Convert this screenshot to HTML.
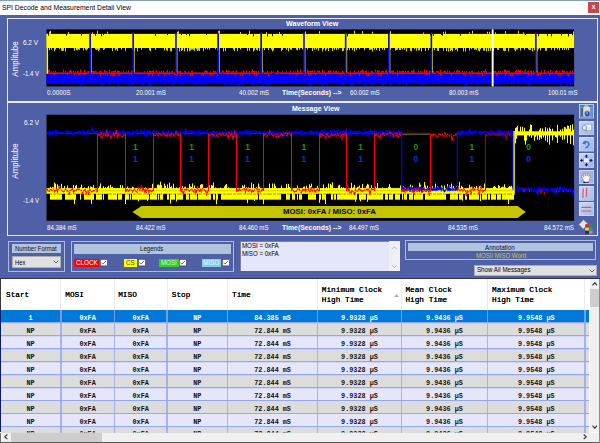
<!DOCTYPE html>
<html><head><meta charset="utf-8"><title>SPI Decode and Measurement Detail View</title>
<style>
html,body{margin:0;padding:0}
body{width:600px;height:443px;overflow:hidden;background:#5060a7;position:relative;font-family:"Liberation Sans",sans-serif}
.abs{position:absolute;display:block}
.t{position:absolute;white-space:pre;transform-origin:0 50%;font-family:"Liberation Sans",sans-serif}
</style></head><body>
<div class="abs" style="left:0;top:0;width:600px;height:15px;background:#fff;border-top:0.8px solid #7f9fba;box-sizing:border-box"></div>
<div class="abs" style="left:588.1px;top:2px;width:10.9px;height:10.9px;background:#c7484c"></div>
<div class="abs" style="left:7px;top:18.1px;width:590.5px;height:218px;border:1.4px solid #e9ecf7;box-sizing:border-box"></div>
<div class="abs" style="left:7px;top:101.2px;width:590px;height:1.4px;background:#e9ecf7"></div>
<svg class="abs" style="left:46px;top:29px" width="529" height="58" viewBox="46 29 529 58"><rect x="46.5" y="29.4" width="527.6" height="57" fill="#000"/><rect x="46.5" y="33.9" width="527.6" height="14.1" fill="#ffff00"/><path d="M49.5,31.6V33.8M50.5,30.8V33.8M68.5,31.9V33.8M92.5,32.4V33.8M97.5,30.6V33.8M107.5,31.7V33.8M177.5,31.7V33.8M178.5,31.3V33.8M218.5,31.1V33.8M219.5,30.6V33.8M240.5,32.1V33.8M249.5,30.7V33.8M266.5,32.1V33.8M279.5,32.1V33.8M305.5,31.4V33.8M319.5,31.2V33.8M354.5,30.7V33.8M362.5,31.1V33.8M372.5,31.7V33.8M390.5,31.2V33.8M423.5,32.5V33.8M443.5,31.9V33.8M445.5,31.6V33.8M469.5,32.2V33.8M472.5,30.9V33.8M487.5,31.7V33.8M489.5,31.7V33.8M495.5,32.3V33.8M505.5,31.1V33.8M518.5,30.7V33.8M523.5,32.3V33.8M573.5,31.4V33.8" stroke="#ffff00" stroke-width="0.9" fill="none"/><path d="M48.5,33.6V35.8M66.5,33.6V35.6M81.5,33.6V35.6M95.5,33.6V35.9M101.5,33.6V36.3M103.5,33.6V35.0M155.5,33.6V35.8M167.5,33.6V35.2M181.5,33.6V35.3M186.5,33.6V34.9M189.5,33.6V36.3M206.5,33.6V34.9M247.5,33.6V35.1M253.5,33.6V36.4M267.5,33.6V36.5M272.5,33.6V36.3M282.5,33.6V35.6M347.5,33.6V36.5M388.5,33.6V35.7M430.5,33.6V35.2M433.5,33.6V35.9M441.5,33.6V35.0M442.5,33.6V35.6M460.5,33.6V35.8M525.5,33.6V34.9M538.5,33.6V36.3M547.5,33.6V36.2M551.5,33.6V36.4M561.5,33.6V35.6M568.5,33.6V36.5M572.5,33.6V35.2" stroke="#000" stroke-width="0.9" fill="none"/><path d="M47.5,47.9V50.7M49.5,47.9V50.3M51.5,47.9V49.8M54.5,47.9V51.2M55.5,47.9V49.6M59.5,47.9V49.4M61.5,47.9V50.6M62.5,47.9V51.0M63.5,47.9V50.6M65.5,47.9V51.5M74.5,47.9V50.8M76.5,47.9V50.1M77.5,47.9V50.3M78.5,47.9V49.4M79.5,47.9V49.8M83.5,47.9V50.2M85.5,47.9V49.7M86.5,47.9V50.4M87.5,47.9V49.3M95.5,47.9V49.4M96.5,47.9V50.0M97.5,47.9V49.5M98.5,47.9V51.2M99.5,47.9V49.9M103.5,47.9V49.9M104.5,47.9V49.4M112.5,47.9V51.1M115.5,47.9V50.4M116.5,47.9V49.4M117.5,47.9V50.8M121.5,47.9V49.7M125.5,47.9V50.8M132.5,47.9V49.6M134.5,47.9V51.1M137.5,47.9V51.4M141.5,47.9V49.9M149.5,47.9V50.3M150.5,47.9V51.1M155.5,47.9V49.9M164.5,47.9V50.5M166.5,47.9V50.3M167.5,47.9V50.8M170.5,47.9V51.2M171.5,47.9V51.4M175.5,47.9V49.7M179.5,47.9V51.5M181.5,47.9V51.0M182.5,47.9V50.2M184.5,47.9V51.3M187.5,47.9V51.4M189.5,47.9V51.2M190.5,47.9V50.5M191.5,47.9V49.6M192.5,47.9V49.5M193.5,47.9V49.7M194.5,47.9V51.0M196.5,47.9V49.3M197.5,47.9V50.9M198.5,47.9V50.3M199.5,47.9V51.1M203.5,47.9V51.1M205.5,47.9V49.4M207.5,47.9V49.5M209.5,47.9V49.8M215.5,47.9V49.3M217.5,47.9V50.4M218.5,47.9V50.2M219.5,47.9V49.8M223.5,47.9V51.5M225.5,47.9V51.1M233.5,47.9V49.6M234.5,47.9V51.1M237.5,47.9V51.1M240.5,47.9V49.5M247.5,47.9V50.9M249.5,47.9V50.8M253.5,47.9V51.5M254.5,47.9V50.3M256.5,47.9V49.8M257.5,47.9V50.6M259.5,47.9V51.1M261.5,47.9V51.3M262.5,47.9V49.3M264.5,47.9V50.1M268.5,47.9V50.1M271.5,47.9V49.4M272.5,47.9V51.4M273.5,47.9V50.4M281.5,47.9V51.3M282.5,47.9V50.0M286.5,47.9V49.7M288.5,47.9V51.3M290.5,47.9V49.5M291.5,47.9V49.8M296.5,47.9V49.9M297.5,47.9V50.4M299.5,47.9V49.8M302.5,47.9V49.4M307.5,47.9V49.5M312.5,47.9V51.0M314.5,47.9V49.6M316.5,47.9V49.5M318.5,47.9V50.6M322.5,47.9V51.4M323.5,47.9V49.3M325.5,47.9V50.8M326.5,47.9V49.4M328.5,47.9V51.1M332.5,47.9V51.0M334.5,47.9V49.8M336.5,47.9V50.2M338.5,47.9V49.4M342.5,47.9V51.4M343.5,47.9V50.8M345.5,47.9V49.3M346.5,47.9V51.4M347.5,47.9V50.1M349.5,47.9V50.3M352.5,47.9V50.2M354.5,47.9V51.3M356.5,47.9V49.9M359.5,47.9V49.3M364.5,47.9V50.2M369.5,47.9V50.1M370.5,47.9V49.7M371.5,47.9V49.4M372.5,47.9V51.5M374.5,47.9V49.5M376.5,47.9V50.2M379.5,47.9V51.1M382.5,47.9V49.8M384.5,47.9V50.2M390.5,47.9V49.7M395.5,47.9V50.6M396.5,47.9V50.1M397.5,47.9V49.9M399.5,47.9V50.0M400.5,47.9V50.0M402.5,47.9V49.5M404.5,47.9V49.7M406.5,47.9V51.4M410.5,47.9V50.9M411.5,47.9V51.3M414.5,47.9V49.3M416.5,47.9V50.7M418.5,47.9V50.4M419.5,47.9V50.4M421.5,47.9V51.4M425.5,47.9V51.0M428.5,47.9V50.2M431.5,47.9V50.5M432.5,47.9V51.1M434.5,47.9V50.2M437.5,47.9V50.7M438.5,47.9V51.0M443.5,47.9V50.9M446.5,47.9V51.2M448.5,47.9V51.5M450.5,47.9V51.0M451.5,47.9V50.1M452.5,47.9V51.3M455.5,47.9V49.9M456.5,47.9V49.4M457.5,47.9V51.4M463.5,47.9V51.5M465.5,47.9V51.5M469.5,47.9V50.7M471.5,47.9V49.3M474.5,47.9V49.8M475.5,47.9V49.3M476.5,47.9V50.1M478.5,47.9V50.7M479.5,47.9V51.4M480.5,47.9V49.5M483.5,47.9V50.7M484.5,47.9V50.7M486.5,47.9V51.3M488.5,47.9V51.0M490.5,47.9V50.6M492.5,47.9V50.0M493.5,47.9V51.3M497.5,47.9V49.5M498.5,47.9V50.0M503.5,47.9V50.7M504.5,47.9V51.2M505.5,47.9V50.9M508.5,47.9V51.3M514.5,47.9V49.8M515.5,47.9V51.3M516.5,47.9V49.5M517.5,47.9V49.6M520.5,47.9V50.6M524.5,47.9V49.8M528.5,47.9V49.5M529.5,47.9V50.0M530.5,47.9V49.9M532.5,47.9V51.4M534.5,47.9V50.2M537.5,47.9V51.2M538.5,47.9V49.3M540.5,47.9V50.4M545.5,47.9V50.8M546.5,47.9V50.7M551.5,47.9V49.8M554.5,47.9V50.3M557.5,47.9V49.6M559.5,47.9V50.3M562.5,47.9V50.0M564.5,47.9V49.8M566.5,47.9V49.7M568.5,47.9V50.1" stroke="#f0f000" stroke-width="0.9" fill="none"/><rect x="46.5" y="72.4" width="527.6" height="2" fill="#ff0000"/><path d="M48.5,70.0V72.6M49.5,69.4V72.6M51.5,71.2V72.6M53.5,71.0V72.6M55.5,70.7V72.6M63.5,69.6V72.6M65.5,70.9V72.6M69.5,70.9V72.6M70.5,69.9V72.6M71.5,71.1V72.6M73.5,71.1V72.6M75.5,70.9V72.6M77.5,71.0V72.6M78.5,71.2V72.6M80.5,69.3V72.6M84.5,70.0V72.6M87.5,71.4V72.6M88.5,71.1V72.6M89.5,71.2V72.6M90.5,71.4V72.6M91.5,70.6V72.6M92.5,70.9V72.6M93.5,70.9V72.6M94.5,71.1V72.6M95.5,70.7V72.6M96.5,71.2V72.6M99.5,71.2V72.6M100.5,70.7V72.6M101.5,71.2V72.6M104.5,69.9V72.6M105.5,71.4V72.6M106.5,71.1V72.6M109.5,69.6V72.6M111.5,71.3V72.6M112.5,71.3V72.6M113.5,70.8V72.6M114.5,70.9V72.6M115.5,70.5V72.6M117.5,70.7V72.6M118.5,70.9V72.6M119.5,71.1V72.6M121.5,71.3V72.6M123.5,71.2V72.6M126.5,71.2V72.6M128.5,70.5V72.6M131.5,70.6V72.6M132.5,70.7V72.6M134.5,70.6V72.6M137.5,71.3V72.6M144.5,71.1V72.6M147.5,71.3V72.6M149.5,70.7V72.6M150.5,70.9V72.6M151.5,70.9V72.6M152.5,70.9V72.6M153.5,69.8V72.6M155.5,71.3V72.6M156.5,69.9V72.6M159.5,70.9V72.6M161.5,71.1V72.6M163.5,71.0V72.6M166.5,71.4V72.6M167.5,69.8V72.6M169.5,71.1V72.6M171.5,71.3V72.6M172.5,70.9V72.6M175.5,70.9V72.6M176.5,71.0V72.6M178.5,71.2V72.6M179.5,71.0V72.6M180.5,71.0V72.6M184.5,70.8V72.6M185.5,71.0V72.6M188.5,71.2V72.6M191.5,70.8V72.6M192.5,70.7V72.6M204.5,71.1V72.6M205.5,70.1V72.6M206.5,70.7V72.6M207.5,71.2V72.6M210.5,71.2V72.6M213.5,70.8V72.6M214.5,70.8V72.6M215.5,71.1V72.6M217.5,71.0V72.6M218.5,70.6V72.6M222.5,70.5V72.6M223.5,71.0V72.6M226.5,69.7V72.6M227.5,71.1V72.6M228.5,70.6V72.6M229.5,70.5V72.6M231.5,71.4V72.6M232.5,71.3V72.6M233.5,70.5V72.6M235.5,71.2V72.6M236.5,70.5V72.6M241.5,71.1V72.6M243.5,70.3V72.6M244.5,71.4V72.6M246.5,70.5V72.6M249.5,70.8V72.6M251.5,71.3V72.6M252.5,69.3V72.6M253.5,71.0V72.6M254.5,71.1V72.6M255.5,71.2V72.6M256.5,71.1V72.6M258.5,70.8V72.6M263.5,70.6V72.6M267.5,71.0V72.6M271.5,70.9V72.6M273.5,71.1V72.6M277.5,70.5V72.6M278.5,70.9V72.6M282.5,71.2V72.6M286.5,71.3V72.6M290.5,70.6V72.6M293.5,71.2V72.6M295.5,71.0V72.6M297.5,69.4V72.6M298.5,71.2V72.6M300.5,69.3V72.6M303.5,71.0V72.6M307.5,69.9V72.6M308.5,70.7V72.6M309.5,71.1V72.6M310.5,71.0V72.6M311.5,71.0V72.6M312.5,70.5V72.6M314.5,70.6V72.6M317.5,71.0V72.6M318.5,71.0V72.6M319.5,70.5V72.6M322.5,69.9V72.6M323.5,71.2V72.6M324.5,71.4V72.6M328.5,70.5V72.6M329.5,70.7V72.6M330.5,70.5V72.6M333.5,70.3V72.6M335.5,71.0V72.6M336.5,70.6V72.6M338.5,71.0V72.6M342.5,70.9V72.6M343.5,71.4V72.6M345.5,70.5V72.6M346.5,70.8V72.6M350.5,71.2V72.6M354.5,70.6V72.6M358.5,71.0V72.6M360.5,70.8V72.6M361.5,70.6V72.6M362.5,69.4V72.6M363.5,70.6V72.6M365.5,71.1V72.6M366.5,70.5V72.6M368.5,71.3V72.6M371.5,70.9V72.6M372.5,71.3V72.6M375.5,69.6V72.6M377.5,70.0V72.6M378.5,70.7V72.6M379.5,71.1V72.6M381.5,71.3V72.6M382.5,70.9V72.6M383.5,70.7V72.6M385.5,70.7V72.6M386.5,69.6V72.6M388.5,71.4V72.6M389.5,71.3V72.6M391.5,70.9V72.6M392.5,70.7V72.6M393.5,70.8V72.6M397.5,70.8V72.6M399.5,71.2V72.6M400.5,71.4V72.6M401.5,71.2V72.6M402.5,70.6V72.6M403.5,71.2V72.6M405.5,70.9V72.6M407.5,71.0V72.6M408.5,70.7V72.6M411.5,70.6V72.6M412.5,71.0V72.6M413.5,69.5V72.6M414.5,71.1V72.6M418.5,70.6V72.6M420.5,71.1V72.6M421.5,71.2V72.6M422.5,71.3V72.6M424.5,69.2V72.6M426.5,70.2V72.6M427.5,70.7V72.6M429.5,70.6V72.6M430.5,71.0V72.6M431.5,71.0V72.6M432.5,71.0V72.6M433.5,71.1V72.6M436.5,71.1V72.6M437.5,71.2V72.6M438.5,71.3V72.6M440.5,69.8V72.6M443.5,71.4V72.6M444.5,70.7V72.6M445.5,70.7V72.6M447.5,70.6V72.6M449.5,70.5V72.6M454.5,71.3V72.6M456.5,70.6V72.6M457.5,69.8V72.6M458.5,70.6V72.6M459.5,70.6V72.6M462.5,71.0V72.6M464.5,71.2V72.6M466.5,70.9V72.6M469.5,71.3V72.6M471.5,70.7V72.6M472.5,70.9V72.6M478.5,71.0V72.6M481.5,70.9V72.6M483.5,71.0V72.6M484.5,70.9V72.6M485.5,69.2V72.6M486.5,71.4V72.6M493.5,71.1V72.6M494.5,71.1V72.6M495.5,71.0V72.6M498.5,71.0V72.6M499.5,71.4V72.6M500.5,70.8V72.6M502.5,71.0V72.6M504.5,69.5V72.6M505.5,69.8V72.6M506.5,70.6V72.6M507.5,70.8V72.6M508.5,70.8V72.6M509.5,70.6V72.6M515.5,71.1V72.6M516.5,69.9V72.6M518.5,69.6V72.6M519.5,70.7V72.6M520.5,69.7V72.6M522.5,70.8V72.6M524.5,71.0V72.6M525.5,69.5V72.6M527.5,71.2V72.6M528.5,70.6V72.6M530.5,70.6V72.6M531.5,70.9V72.6M533.5,70.7V72.6M536.5,70.8V72.6M537.5,71.1V72.6M541.5,70.1V72.6M544.5,70.1V72.6M547.5,71.3V72.6M548.5,71.2V72.6M550.5,70.4V72.6M552.5,71.2V72.6M555.5,70.9V72.6M556.5,70.1V72.6M557.5,70.9V72.6M559.5,70.8V72.6M562.5,69.7V72.6M563.5,70.8V72.6M564.5,71.0V72.6M566.5,71.3V72.6M567.5,71.3V72.6M570.5,70.9V72.6M572.5,70.5V72.6" stroke="#ff0000" stroke-width="1.0" fill="none"/><rect x="46.5" y="74.1" width="527.6" height="9.7" fill="#0000ff"/><path d="M61.5,83.6V84.8M63.5,83.6V85.7M66.5,83.6V84.8M70.5,73.0V74.2M72.5,72.9V74.2M80.5,83.6V85.1M82.5,83.6V84.4M85.5,83.6V85.7M87.5,73.5V74.2M90.5,73.5V74.2M100.5,83.6V84.9M102.5,83.6V85.1M106.5,73.3V74.2M108.5,83.6V84.8M109.5,83.6V85.0M118.5,83.6V85.6M123.5,83.6V84.6M125.5,83.6V85.2M127.5,83.6V84.8M128.5,83.6V85.4M132.5,83.6V85.4M137.5,83.6V84.6M139.5,83.6V84.5M141.5,83.6V84.8M142.5,83.6V85.6M145.5,73.4V74.2M147.5,83.6V85.6M148.5,83.6V84.7M149.5,83.6V85.7M150.5,83.6V85.4M156.5,73.3V74.2M159.5,83.6V85.4M163.5,83.6V84.9M164.5,83.6V84.8M172.5,83.6V85.3M179.5,83.6V84.5M179.5,73.6V74.2M182.5,83.6V85.1M183.5,83.6V85.2M183.5,73.5V74.2M187.5,83.6V84.4M189.5,83.6V85.3M196.5,83.6V85.2M200.5,83.6V84.8M201.5,83.6V85.4M204.5,83.6V85.6M222.5,72.8V74.2M224.5,83.6V85.3M229.5,83.6V85.6M230.5,83.6V85.1M233.5,83.6V85.1M234.5,83.6V85.0M237.5,83.6V85.8M238.5,83.6V85.6M239.5,83.6V85.7M241.5,83.6V84.7M242.5,83.6V85.2M247.5,83.6V85.4M251.5,73.2V74.2M252.5,83.6V85.2M253.5,83.6V85.7M256.5,83.6V84.4M257.5,83.6V85.2M259.5,83.6V85.6M261.5,72.9V74.2M262.5,83.6V85.1M263.5,72.8V74.2M266.5,83.6V85.6M268.5,83.6V84.9M269.5,72.8V74.2M272.5,73.2V74.2M273.5,73.1V74.2M274.5,72.7V74.2M279.5,73.2V74.2M301.5,83.6V84.7M306.5,72.8V74.2M308.5,83.6V85.0M310.5,83.6V85.4M313.5,83.6V84.7M318.5,73.0V74.2M319.5,83.6V85.3M322.5,83.6V85.7M323.5,73.2V74.2M325.5,83.6V84.6M326.5,83.6V85.5M336.5,83.6V84.4M340.5,83.6V84.4M342.5,83.6V85.7M343.5,83.6V84.6M350.5,83.6V85.4M352.5,83.6V85.2M357.5,83.6V85.5M359.5,83.6V85.2M364.5,83.6V85.4M370.5,83.6V84.6M371.5,83.6V85.7M372.5,83.6V84.6M373.5,83.6V84.9M375.5,72.8V74.2M377.5,83.6V85.1M381.5,83.6V85.0M382.5,83.6V85.4M383.5,83.6V84.9M385.5,83.6V85.8M387.5,83.6V84.8M390.5,83.6V85.4M398.5,83.6V85.3M401.5,83.6V84.6M403.5,83.6V85.4M406.5,83.6V85.4M419.5,83.6V85.7M422.5,83.6V85.6M425.5,83.6V84.9M433.5,83.6V85.4M436.5,72.8V74.2M437.5,72.8V74.2M443.5,73.0V74.2M449.5,83.6V85.8M454.5,73.2V74.2M461.5,73.3V74.2M464.5,83.6V85.5M466.5,83.6V85.4M467.5,73.3V74.2M471.5,73.6V74.2M476.5,83.6V84.8M483.5,72.9V74.2M491.5,83.6V85.0M492.5,83.6V85.6M493.5,83.6V85.7M497.5,83.6V85.7M498.5,83.6V85.5M502.5,73.4V74.2M507.5,83.6V85.5M508.5,73.0V74.2M513.5,83.6V85.7M522.5,73.2V74.2M525.5,83.6V84.9M527.5,83.6V85.5M528.5,83.6V85.2M530.5,73.1V74.2M531.5,83.6V85.3M539.5,83.6V85.1M541.5,83.6V84.6M543.5,73.5V74.2M547.5,83.6V84.8M547.5,73.0V74.2M552.5,83.6V84.7M553.5,73.2V74.2M557.5,83.6V85.7M560.5,83.6V84.9M561.5,83.6V84.9M566.5,83.6V85.3M570.5,83.6V85.6" stroke="#0000ff" stroke-width="0.95" fill="none"/><path d="M54.5,74V75.3M67.5,74V75.1M74.5,74V75.5M78.5,74V75.0M79.5,74V74.9M84.5,74V75.2M100.5,74V76.2M103.5,74V75.0M105.5,74V75.2M107.5,74V75.8M110.5,74V75.3M112.5,74V76.1M114.5,74V75.8M118.5,74V75.5M131.5,74V75.2M139.5,74V75.1M148.5,74V75.9M152.5,74V76.1M158.5,74V75.9M164.5,74V75.8M169.5,74V75.6M174.5,74V75.2M175.5,74V74.9M176.5,74V75.8M177.5,74V75.3M180.5,74V75.8M190.5,74V75.9M192.5,74V76.0M201.5,74V75.4M202.5,74V74.9M203.5,74V75.8M210.5,74V75.2M212.5,74V74.9M217.5,74V75.7M227.5,74V75.1M234.5,74V75.4M240.5,74V75.9M242.5,74V75.2M249.5,74V75.3M254.5,74V75.4M256.5,74V75.9M268.5,74V76.1M289.5,74V75.3M293.5,74V74.8M296.5,74V74.9M304.5,74V75.5M308.5,74V75.6M311.5,74V75.9M315.5,74V75.3M325.5,74V75.9M340.5,74V74.9M344.5,74V74.8M350.5,74V75.7M359.5,74V76.0M366.5,74V76.0M368.5,74V76.0M371.5,74V75.8M378.5,74V74.8M380.5,74V75.5M381.5,74V75.8M387.5,74V74.9M397.5,74V76.2M426.5,74V75.0M427.5,74V75.3M429.5,74V75.4M440.5,74V75.7M441.5,74V75.4M451.5,74V75.9M463.5,74V75.1M464.5,74V74.9M470.5,74V75.3M478.5,74V74.9M482.5,74V76.1M492.5,74V75.6M496.5,74V76.0M497.5,74V74.9M501.5,74V74.9M505.5,74V76.1M510.5,74V75.5M512.5,74V76.0M517.5,74V75.5M519.5,74V75.0M528.5,74V75.6M531.5,74V75.6M533.5,74V75.0M536.5,74V74.9M537.5,74V75.5M538.5,74V75.5M540.5,74V75.4M549.5,74V75.6M558.5,74V75.1M560.5,74V75.1M567.5,74V75.8M568.5,74V76.2" stroke="#ff0000" stroke-width="0.9" fill="none"/><rect x="46.6" y="33.7" width="1.5" height="40" fill="#ffff00"/><rect x="46.6" y="32.8" width="1.2" height="1.2" fill="#ff0000"/><rect x="89.35000000000001" y="33.2" width="1.6" height="41" fill="#0000ff"/><rect x="90.95" y="48" width="0.75" height="24.5" fill="#c8c848"/><rect x="89.7" y="32.6" width="1.1" height="1.1" fill="#ff0000"/><rect x="132.35" y="33.2" width="1.6" height="41" fill="#0000ff"/><rect x="133.95" y="48" width="0.75" height="24.5" fill="#c8c848"/><rect x="132.7" y="32.6" width="1.1" height="1.1" fill="#ff0000"/><rect x="175.15" y="33.2" width="1.6" height="41" fill="#0000ff"/><rect x="176.75" y="48" width="0.75" height="24.5" fill="#c8c848"/><rect x="175.5" y="32.6" width="1.1" height="1.1" fill="#ff0000"/><rect x="217.35" y="33.2" width="1.6" height="41" fill="#0000ff"/><rect x="218.95" y="48" width="0.75" height="24.5" fill="#c8c848"/><rect x="217.7" y="32.6" width="1.1" height="1.1" fill="#ff0000"/><rect x="260.34999999999997" y="33.2" width="1.6" height="41" fill="#0000ff"/><rect x="261.95" y="48" width="0.75" height="24.5" fill="#c8c848"/><rect x="260.7" y="32.6" width="1.1" height="1.1" fill="#ff0000"/><rect x="303.15" y="33.2" width="1.6" height="41" fill="#0000ff"/><rect x="304.75" y="48" width="0.75" height="24.5" fill="#c8c848"/><rect x="303.5" y="32.6" width="1.1" height="1.1" fill="#ff0000"/><rect x="344.84999999999997" y="33.2" width="1.6" height="41" fill="#0000ff"/><rect x="346.45" y="48" width="0.75" height="24.5" fill="#c8c848"/><rect x="345.2" y="32.6" width="1.1" height="1.1" fill="#ff0000"/><rect x="388.04999999999995" y="33.2" width="1.6" height="41" fill="#0000ff"/><rect x="389.65" y="48" width="0.75" height="24.5" fill="#c8c848"/><rect x="388.4" y="32.6" width="1.1" height="1.1" fill="#ff0000"/><rect x="430.54999999999995" y="33.2" width="1.6" height="41" fill="#0000ff"/><rect x="432.15" y="48" width="0.75" height="24.5" fill="#c8c848"/><rect x="430.9" y="32.6" width="1.1" height="1.1" fill="#ff0000"/><rect x="535.05" y="33.2" width="1.6" height="41" fill="#0000ff"/><rect x="536.65" y="48" width="0.75" height="24.5" fill="#c8c848"/><rect x="535.4" y="32.6" width="1.1" height="1.1" fill="#ff0000"/><rect x="491.7" y="29.4" width="1.9" height="57" fill="#fff"/></svg>
<svg class="abs" style="left:46px;top:114px" width="529" height="108" viewBox="46 114 529 108"><rect x="46.5" y="114.7" width="527.6" height="106.1" fill="#000"/><rect x="46.5" y="188.3" width="467.29999999999995" height="5.4" fill="#ffff00"/><path d="M47.5,188.3V193.7M48.5,188.3V193.7M49.5,188.3V193.7M50.5,186.9V199.7M51.5,188.3V199.7M52.5,186.9V199.7M53.5,187.4V199.7M54.5,182.5V199.7M55.5,183.7V199.7M56.5,188.3V199.7M57.5,184.3V199.7M58.5,186.1V199.7M59.5,186.3V199.7M60.5,188.3V199.7M61.5,183.8V199.7M62.5,188.3V193.7M63.5,188.3V193.7M64.5,186.0V193.7M65.5,188.3V199.7M66.5,188.3V199.7M67.5,185.4V199.7M68.5,188.3V199.7M69.5,188.3V199.7M70.5,188.3V199.7M71.5,188.3V199.7M72.5,188.3V199.7M73.5,185.0V199.7M74.5,188.3V204.2M75.5,185.8V199.7M76.5,184.9V193.7M77.5,188.3V193.7M78.5,188.3V193.7M79.5,188.3V193.7M80.5,187.3V199.7M81.5,184.7V193.7M82.5,188.3V193.7M83.5,188.3V193.7M84.5,187.4V199.7M85.5,188.3V199.7M86.5,188.3V199.7M87.5,188.3V199.7M88.5,186.2V199.7M89.5,188.3V199.7M90.5,186.5V199.7M91.5,186.9V203.8M92.5,187.4V199.7M93.5,185.0V199.7M94.5,188.3V193.7M95.5,188.3V193.7M96.5,188.3V199.7M97.5,188.3V199.7M98.5,188.3V199.7M99.5,186.3V199.7M100.5,183.4V199.7M101.5,188.3V199.7M102.5,188.3V193.7M103.5,186.2V199.7M104.5,188.3V193.7M105.5,187.3V193.7M106.5,188.3V193.7M107.5,186.9V193.7M108.5,185.6V199.7M109.5,188.3V199.7M110.5,184.8V199.7M111.5,187.4V199.7M112.5,186.8V199.7M113.5,188.3V199.7M114.5,188.3V199.7M115.5,188.3V199.7M116.5,188.3V199.7M117.5,188.3V193.7M118.5,188.3V199.7M119.5,188.3V199.7M120.5,185.0V199.7M121.5,188.3V199.7M122.5,185.4V193.7M123.5,188.3V193.7M124.5,188.3V193.7M125.5,183.9V204.0M126.5,188.3V199.7M127.5,186.5V199.7M128.5,188.3V199.7M129.5,188.3V193.7M130.5,188.3V199.7M131.5,188.3V193.7M132.5,186.6V199.7M133.5,187.2V199.7M134.5,188.3V199.7M135.5,188.3V199.7M136.5,188.3V199.7M137.5,188.3V199.7M138.5,188.3V201.3M139.5,188.3V199.7M140.5,188.3V199.7M141.5,188.3V199.7M142.5,188.3V199.7M143.5,188.3V199.7M144.5,188.3V199.7M145.5,187.5V199.7M146.5,188.3V199.7M147.5,188.3V200.9M148.5,188.3V199.7M149.5,188.3V193.7M150.5,188.3V199.7M151.5,188.3V199.7M152.5,183.8V199.7M153.5,183.2V199.7M154.5,188.3V199.7M155.5,188.3V199.7M156.5,188.3V199.7M157.5,184.7V193.7M158.5,184.5V199.7M159.5,185.3V193.7M160.5,181.6V199.7M161.5,185.2V199.7M162.5,188.3V199.7M163.5,188.3V193.7M164.5,183.6V193.7M165.5,185.8V193.7M166.5,188.3V193.7M167.5,184.4V199.7M168.5,188.3V199.7M169.5,182.6V193.7M170.5,186.8V203.6M171.5,186.1V199.7M172.5,188.3V199.7M173.5,183.7V199.7M174.5,188.3V199.7M175.5,188.3V193.7M176.5,187.4V201.5M177.5,188.3V199.7M178.5,188.3V199.7M179.5,187.4V199.7M180.5,188.3V199.7M181.5,188.3V199.7M182.5,186.1V199.7M183.5,188.3V193.7M184.5,187.2V193.7M185.5,186.6V193.7M186.5,188.3V199.7M187.5,188.3V199.7M188.5,188.3V199.7M189.5,183.9V193.7M190.5,186.4V199.7M191.5,187.0V199.7M192.5,183.4V199.7M193.5,188.3V199.7M194.5,185.4V199.7M195.5,188.3V199.7M196.5,188.3V199.7M197.5,188.3V193.7M198.5,188.3V199.7M199.5,188.3V199.7M200.5,184.8V199.7M201.5,184.0V199.7M202.5,184.3V199.7M203.5,188.3V199.7M204.5,188.3V199.7M205.5,188.3V199.7M206.5,188.3V199.7M207.5,187.4V199.7M208.5,184.6V199.7M209.5,185.2V199.7M210.5,188.3V199.7M211.5,185.1V193.7M212.5,185.5V193.7M213.5,182.4V199.7M214.5,188.3V199.7M215.5,187.5V193.7M216.5,188.3V204.3M217.5,188.3V199.7M218.5,188.3V193.7M219.5,188.3V193.7M220.5,187.5V193.7M221.5,188.3V199.7M222.5,188.3V199.7M223.5,188.3V199.7M224.5,186.4V199.7M225.5,184.8V199.7M226.5,184.0V199.7M227.5,188.3V199.7M228.5,187.4V199.7M229.5,188.3V199.7M230.5,188.3V199.7M231.5,188.3V199.7M232.5,188.3V199.7M233.5,188.3V199.7M234.5,188.3V199.7M235.5,188.3V199.7M236.5,186.8V199.7M237.5,188.3V199.7M238.5,188.3V199.7M239.5,188.3V199.7M240.5,188.3V199.7M241.5,188.3V199.7M242.5,185.3V199.7M243.5,186.7V199.7M244.5,184.7V199.7M245.5,188.3V199.7M246.5,187.1V199.7M247.5,188.3V203.2M248.5,187.4V199.7M249.5,188.3V199.7M250.5,188.3V199.7M251.5,182.6V199.7M252.5,188.3V199.7M253.5,184.0V199.7M254.5,188.3V201.0M255.5,188.3V199.7M256.5,187.1V199.7M257.5,188.3V199.7M258.5,183.5V193.7M259.5,186.7V199.7M260.5,188.3V199.7M261.5,188.3V199.7M262.5,188.3V199.7M263.5,185.1V204.2M264.5,188.3V199.7M265.5,188.3V199.7M266.5,188.3V199.7M267.5,188.3V199.7M268.5,188.3V199.7M269.5,183.6V199.7M270.5,188.3V199.7M271.5,188.3V199.7M272.5,183.5V199.7M273.5,188.3V199.7M274.5,183.7V199.7M275.5,186.1V199.7M276.5,188.3V199.7M277.5,188.3V199.7M278.5,188.3V199.7M279.5,188.3V199.7M280.5,188.3V199.7M281.5,185.6V193.7M282.5,188.3V193.7M283.5,188.3V193.7M284.5,188.3V193.7M285.5,188.3V193.7M286.5,183.8V199.7M287.5,188.3V199.7M288.5,184.0V199.7M289.5,187.1V199.7M290.5,188.3V193.7M291.5,186.3V193.7M292.5,188.3V199.7M293.5,188.3V199.7M294.5,188.3V199.7M295.5,188.3V193.7M296.5,188.3V193.7M297.5,185.4V199.7M298.5,188.3V193.7M299.5,188.3V199.7M300.5,188.3V199.7M301.5,188.3V199.7M302.5,188.3V193.7M303.5,186.8V193.7M304.5,186.4V193.7M305.5,188.3V193.7M306.5,185.8V193.7M307.5,188.3V193.7M308.5,188.3V199.7M309.5,184.3V199.7M310.5,186.0V199.7M311.5,183.6V199.7M312.5,188.3V199.7M313.5,188.3V199.7M314.5,188.3V199.7M315.5,188.3V199.7M316.5,188.3V193.7M317.5,185.9V193.7M318.5,188.3V193.7M319.5,188.3V202.9M320.5,188.3V199.7M321.5,188.3V193.7M322.5,188.3V199.7M323.5,184.5V199.7M324.5,188.3V199.7M325.5,188.3V204.0M326.5,187.2V193.7M327.5,188.3V193.7M328.5,183.5V193.7M329.5,188.3V193.7M330.5,183.8V193.7M331.5,185.2V199.7M332.5,182.2V199.7M333.5,188.3V193.7M334.5,188.3V199.7M335.5,188.3V199.7M336.5,188.3V193.7M337.5,188.3V199.7M338.5,185.5V199.7M339.5,184.8V199.7M340.5,188.3V199.7M341.5,187.0V199.7M342.5,188.3V199.7M343.5,187.3V199.7M344.5,188.3V199.7M345.5,188.3V199.7M346.5,186.1V199.7M347.5,188.3V199.7M348.5,188.3V199.7M349.5,188.3V199.7M350.5,188.3V199.7M351.5,182.9V199.7M352.5,188.3V199.7M353.5,186.9V199.7M354.5,184.8V199.7M355.5,188.3V201.8M356.5,188.3V199.7M357.5,186.8V193.7M358.5,186.9V193.7M359.5,185.5V199.7M360.5,188.3V201.3M361.5,188.3V199.7M362.5,184.1V199.7M363.5,188.3V199.7M364.5,188.3V199.7M365.5,188.3V199.7M366.5,185.7V193.7M367.5,183.8V201.8M368.5,184.6V199.7M369.5,188.3V199.7M370.5,188.3V199.7M371.5,185.2V199.7M372.5,188.3V199.7M373.5,188.3V199.7M374.5,188.3V199.7M375.5,186.6V199.7M376.5,188.3V199.7M377.5,183.1V199.7M378.5,188.3V199.7M379.5,188.3V199.7M380.5,188.3V199.7M381.5,188.3V199.7M382.5,187.4V199.7M383.5,188.3V193.7M384.5,188.3V193.7M385.5,188.3V199.7M386.5,188.3V199.7M387.5,188.3V199.7M388.5,186.8V193.7M389.5,184.1V199.7M390.5,187.1V199.7M391.5,188.3V199.7M392.5,188.3V199.7M393.5,188.3V193.7M394.5,188.3V193.7M395.5,188.3V199.7M396.5,188.3V199.7M397.5,188.3V199.7M398.5,188.3V199.7M399.5,188.3V199.7M400.5,185.5V193.7M401.5,188.3V193.7M402.5,188.3V199.7M403.5,186.2V193.7M404.5,187.4V199.7M405.5,188.3V199.7M406.5,188.3V199.7M407.5,188.3V193.7M408.5,188.3V193.7M409.5,186.8V199.7M410.5,184.6V199.7M411.5,186.8V199.7M412.5,185.7V199.7M413.5,188.3V193.7M414.5,188.3V199.7M415.5,188.3V199.7M416.5,188.3V199.7M417.5,188.3V199.7M418.5,188.3V199.7M419.5,182.6V199.7M420.5,184.7V199.7M421.5,188.3V199.7M422.5,188.3V199.7M423.5,187.3V193.7M424.5,181.9V193.7M425.5,185.6V199.7M426.5,188.3V199.7M427.5,185.6V199.7M428.5,188.3V199.7M429.5,187.0V199.7M430.5,188.3V199.7M431.5,188.3V199.7M432.5,186.2V199.7M433.5,188.3V199.7M434.5,188.3V199.7M435.5,183.6V199.7M436.5,188.3V199.7M437.5,186.1V199.7M438.5,187.1V199.7M439.5,188.3V199.7M440.5,188.3V199.7M441.5,185.4V199.7M442.5,186.5V199.7M443.5,188.3V199.7M444.5,185.6V199.7M445.5,188.3V199.7M446.5,188.3V193.7M447.5,184.1V193.7M448.5,188.3V193.7M449.5,185.2V193.7M450.5,187.0V199.7M451.5,183.6V199.7M452.5,186.9V199.7M453.5,186.1V199.7M454.5,188.3V199.7M455.5,188.3V199.7M456.5,186.0V199.7M457.5,188.3V199.7M458.5,186.3V193.7M459.5,181.7V199.7M460.5,188.3V199.7M461.5,185.7V199.7M462.5,187.0V200.7M463.5,188.3V193.7M464.5,188.3V193.7M465.5,188.3V199.7M466.5,188.3V199.7M467.5,188.3V193.7M468.5,188.3V193.7M469.5,184.8V199.7M470.5,187.4V199.7M471.5,186.6V199.7M472.5,188.3V199.7M473.5,188.3V199.7M474.5,187.0V199.7M475.5,188.3V199.7M476.5,186.0V199.7M477.5,188.3V199.7M478.5,188.3V199.7M479.5,186.2V193.7M480.5,185.7V201.0M481.5,188.3V193.7M482.5,188.3V199.7M483.5,188.3V199.7M484.5,183.5V199.7M485.5,185.7V199.7M486.5,188.3V199.7M487.5,188.3V193.7M488.5,188.3V199.7M489.5,188.3V199.7M490.5,188.3V193.7M491.5,188.3V199.7M492.5,188.3V199.7M493.5,186.6V199.7M494.5,186.0V199.7M495.5,186.9V199.7M496.5,188.3V193.7M497.5,188.3V199.7M498.5,185.0V199.7M499.5,185.9V199.7M500.5,188.3V199.7M501.5,187.3V193.7M502.5,186.6V199.7M503.5,187.1V199.7M504.5,184.2V199.7M505.5,187.3V199.7M506.5,188.3V199.7M507.5,188.3V199.7M508.5,187.3V204.1M509.5,186.0V199.7M510.5,186.4V199.7M511.5,185.8V199.7M512.5,187.3V199.7M513.5,188.3V199.7M514.5,131.3V135.4M515.5,127.9V143.3M516.5,127.3V138.7M517.5,125.9V135.4M518.5,131.3V135.4M519.5,131.3V135.4M520.5,126.7V135.4M521.5,131.3V135.4M522.5,126.7V135.4M523.5,131.3V135.4M524.5,127.7V140.7M525.5,131.3V144.7M526.5,131.3V140.5M527.5,131.3V135.4M528.5,131.3V135.4M529.5,129.4V136.6M530.5,124.4V135.4M531.5,125.0V137.8M532.5,131.3V135.4M533.5,131.3V135.4M534.5,131.3V140.7M535.5,131.3V136.9M536.5,131.3V135.4M537.5,131.3V139.6M538.5,131.3V135.4M539.5,129.7V139.9M540.5,128.2V137.5M541.5,131.3V138.8M542.5,128.5V135.4M543.5,131.3V137.4M544.5,131.3V135.4M545.5,127.1V140.6M546.5,131.3V135.4M547.5,128.3V142.2M548.5,131.3V135.4M549.5,127.5V144.6M550.5,129.0V135.4M551.5,131.3V135.4M552.5,128.7V140.4M553.5,131.3V135.4M554.5,131.3V135.4M555.5,131.3V137.0M556.5,131.3V137.5M557.5,124.9V143.1M558.5,131.3V135.4M559.5,131.3V135.4M560.5,129.6V136.7M561.5,131.3V135.4M562.5,128.7V139.8M563.5,131.3V135.4M564.5,126.9V139.4M565.5,127.3V135.4M566.5,129.0V135.4M567.5,125.5V143.2M568.5,125.8V135.4M569.5,128.7V135.4M570.5,125.3V144.1M571.5,131.3V135.4M572.5,124.2V135.4M573.5,129.6V145.3" stroke="#ffff00" stroke-width="1" fill="none"/><path d="M47,190.8H513.8" stroke="#5a5a10" stroke-width="0.6" opacity="0.5" fill="none"/><path d="M47,194.1H513.8" stroke="#000" stroke-width="0.8" opacity="0.5" fill="none" stroke-dasharray="5 1.2 3 0.8"/><rect x="513.1999999999999" y="131" width="1.3" height="64" fill="#ffff00"/><path d="M401.7,134.3H430" stroke="#7a8a40" stroke-width="0.8"/><path d="M401.7,133.2H430" stroke="#c03020" stroke-width="0.5"/><path d="M47,133.3H401" stroke="#8a7a20" stroke-width="0.6"/><path d="M47.0,132.8 L47.9,132.6 L48.8,134.1 L49.7,131.6 L50.6,134.3 L51.5,133.4 L52.4,132.7 L53.3,131.8 L54.2,132.9 L55.1,134.2 L56.0,131.0 L56.9,133.3 L57.8,132.7 L58.7,132.0 L59.6,133.7 L60.5,133.3 L61.4,132.8 L62.3,132.1 L63.2,132.2 L64.1,133.4 L65.0,133.9 L65.9,133.0 L66.8,131.3 L67.7,131.2 L68.6,131.0 L69.5,132.3 L70.4,132.4 L71.3,132.5 L72.2,132.9 L73.1,134.6 L74.0,132.6 L74.9,134.6 L75.8,133.4 L76.7,132.4 L77.6,132.0 L78.5,131.1 L79.4,134.2 L80.3,132.6 L81.2,131.9 L82.1,132.9 L83.0,134.5 L83.9,131.8 L84.8,132.0 L85.7,134.4 L86.6,133.1 L87.5,131.1 L88.4,131.3 L89.3,132.4 L90.2,131.4 L91.1,131.0 L92.0,127.9 L92.9,131.6 L93.8,131.4 L94.7,132.5 L95.6,131.8 L96.5,131.1 L97.4,131.3 L98.3,132.5 L99.2,134.2 L100.1,131.1 L101.0,133.1 L101.9,132.0 L102.8,131.6 L103.7,132.0 L104.6,132.0 L105.5,136.2 L106.4,132.8 L107.3,131.3 L108.2,132.8 L109.1,132.3 L110.0,134.3 L110.9,134.6 L111.8,134.7 L112.7,131.9 L113.6,133.2 L114.5,134.7 L115.4,134.0 L116.3,131.2 L117.2,131.6 L118.1,133.2 L119.0,132.7 L119.9,131.3 L120.8,131.3 L121.7,133.4 L122.6,131.1 L123.5,134.5 L124.4,132.5 L125.3,133.5 L126.2,133.4 L127.1,133.1 L128.0,131.6 L128.9,134.6 L129.8,134.7 L130.7,134.1 L131.6,133.7 L132.5,134.5 L133.4,134.2 L134.3,133.9 L135.2,132.1 L136.1,133.9 L137.0,134.1 L137.9,131.5 L138.8,133.1 L139.7,132.2 L140.6,131.5 L141.5,131.7 L142.4,132.2 L143.3,132.0 L144.2,131.8 L145.1,135.8 L146.0,136.7 L146.9,131.8 L147.8,133.0 L148.7,133.1 L149.6,131.8 L150.5,134.6 L151.4,134.7 L152.3,131.4 L153.2,131.0 L154.1,134.0 L155.0,133.0 L155.9,131.5 L156.8,131.9 L157.7,131.6 L158.6,133.1 L159.5,133.3 L160.4,134.4 L161.3,133.1 L162.2,134.4 L163.1,131.3 L164.0,133.6 L164.9,133.4 L165.8,134.5 L166.7,132.6 L167.6,133.8 L168.5,131.3 L169.4,134.0 L170.3,133.5 L171.2,131.4 L172.1,132.8 L173.0,134.5 L173.9,132.6 L174.8,133.3 L175.7,134.6 L176.6,131.2 L177.5,131.0 L178.4,132.5 L179.3,132.5 L180.2,133.9 L181.1,131.8 L182.0,132.8 L182.9,133.4 L183.8,132.1 L184.7,134.7 L185.6,128.3 L186.5,131.1 L187.4,134.1 L188.3,134.6 L189.2,133.1 L190.1,130.9 L191.0,131.9 L191.9,131.1 L192.8,132.3 L193.7,132.4 L194.6,133.7 L195.5,133.2 L196.4,133.2 L197.3,134.6 L198.2,131.1 L199.1,133.4 L200.0,134.4 L200.9,134.3 L201.8,133.1 L202.7,132.0 L203.6,133.2 L204.5,133.0 L205.4,133.1 L206.3,133.1 L207.2,131.0 L208.1,133.0 L209.0,134.6 L209.9,132.7 L210.8,132.9 L211.7,132.8 L212.6,137.0 L213.5,131.0 L214.4,133.9 L215.3,132.3 L216.2,133.6 L217.1,133.2 L218.0,133.1 L218.9,133.9 L219.8,131.8 L220.7,132.4 L221.6,134.0 L222.5,133.0 L223.4,132.3 L224.3,132.8 L225.2,131.5 L226.1,132.4 L227.0,132.8 L227.9,131.5 L228.8,132.1 L229.7,133.1 L230.6,133.9 L231.5,131.4 L232.4,134.0 L233.3,134.5 L234.2,135.3 L235.1,136.6 L236.0,133.8 L236.9,134.1 L237.8,132.1 L238.7,134.4 L239.6,133.5 L240.5,134.1 L241.4,131.9 L242.3,133.0 L243.2,134.2 L244.1,131.8 L245.0,133.5 L245.9,133.9 L246.8,130.0 L247.7,133.8 L248.6,134.0 L249.5,131.3 L250.4,134.2 L251.3,131.2 L252.2,131.2 L253.1,131.2 L254.0,133.4 L254.9,132.5 L255.8,131.0 L256.7,131.8 L257.6,133.6 L258.5,132.9 L259.4,131.4 L260.3,132.0 L261.2,133.7 L262.1,132.1 L263.0,134.2 L263.9,132.7 L264.8,134.4 L265.7,132.6 L266.6,134.2 L267.5,131.9 L268.4,132.8 L269.3,131.5 L270.2,134.7 L271.1,132.4 L272.0,134.3 L272.9,131.4 L273.8,133.7 L274.7,133.4 L275.6,132.9 L276.5,132.6 L277.4,134.4 L278.3,134.4 L279.2,134.6 L280.1,134.4 L281.0,134.2 L281.9,138.0 L282.8,134.0 L283.7,134.0 L284.6,133.8 L285.5,132.5 L286.4,133.9 L287.3,131.2 L288.2,131.7 L289.1,132.5 L290.0,134.3 L290.9,133.3 L291.8,131.5 L292.7,133.1 L293.6,134.6 L294.5,132.2 L295.4,131.6 L296.3,133.1 L297.2,132.5 L298.1,132.1 L299.0,132.6 L299.9,133.0 L300.8,131.1 L301.7,132.2 L302.6,134.3 L303.5,133.9 L304.4,132.9 L305.3,132.7 L306.2,133.5 L307.1,134.4 L308.0,132.6 L308.9,133.4 L309.8,131.1 L310.7,131.0 L311.6,133.3 L312.5,132.6 L313.4,131.6 L314.3,134.0 L315.2,133.6 L316.1,134.0 L317.0,133.4 L317.9,133.0 L318.8,134.6 L319.7,132.9 L320.6,131.3 L321.5,131.8 L322.4,130.9 L323.3,134.2 L324.2,133.6 L325.1,131.8 L326.0,132.0 L326.9,132.2 L327.8,133.1 L328.7,134.6 L329.6,138.2 L330.5,131.0 L331.4,132.4 L332.3,132.1 L333.2,133.9 L334.1,133.8 L335.0,131.0 L335.9,131.7 L336.8,130.9 L337.7,133.4 L338.6,133.3 L339.5,133.7 L340.4,131.7 L341.3,133.2 L342.2,131.7 L343.1,130.8 L344.0,133.7 L344.9,131.6 L345.8,131.3 L346.7,129.1 L347.6,132.9 L348.5,134.3 L349.4,132.0 L350.3,133.5 L351.2,131.9 L352.1,132.9 L353.0,132.1 L353.9,132.5 L354.8,131.0 L355.7,135.9 L356.6,131.9 L357.5,131.3 L358.4,131.4 L359.3,131.9 L360.2,132.6 L361.1,132.9 L362.0,133.7 L362.9,134.4 L363.8,133.0 L364.7,132.2 L365.6,134.3 L366.5,131.3 L367.4,136.2 L368.3,131.8 L369.2,134.1 L370.1,132.8 L371.0,131.6 L371.9,132.5 L372.8,131.6 L373.7,131.1 L374.6,131.3 L375.5,132.9 L376.4,135.1 L377.3,134.2 L378.2,131.7 L379.1,132.7 L380.0,132.2 L380.9,134.5 L381.8,134.6 L382.7,131.7 L383.6,134.5 L384.5,134.1 L385.4,133.7 L386.3,131.3 L387.2,131.3 L388.1,133.6 L389.0,133.5 L389.9,137.9 L390.8,132.4 L391.7,132.7 L392.6,132.0 L393.5,131.0 L394.4,131.2 L395.3,133.5 L396.2,134.6 L397.1,136.5 L398.0,133.7 L398.9,131.0 L399.8,132.6 L400.7,134.0 L401.6,131.0 L401.7,132.8 L401.7,189.0 L402.1,184.7 L403.0,190.9 L403.9,187.9 L404.8,190.5 L405.7,189.3 L406.6,188.7 L407.5,187.1 L408.4,187.3 L409.3,187.5 L410.2,190.3 L411.1,187.3 L412.0,189.0 L412.9,187.7 L413.8,190.1 L414.7,190.4 L415.6,188.1 L416.5,188.8 L417.4,189.3 L418.3,189.0 L419.2,190.9 L420.1,187.2 L421.0,188.3 L421.9,192.7 L422.8,188.9 L423.7,189.8 L424.6,190.0 L425.5,189.9 L426.4,189.2 L427.3,190.0 L428.2,188.4 L429.1,190.2 L430.0,187.5 L430.9,187.5 L431.8,189.9 L432.7,190.1 L433.6,189.2 L434.5,189.6 L435.4,189.3 L436.3,190.0 L437.2,187.6 L438.1,188.7 L439.0,189.2 L439.9,188.6 L440.8,188.5 L441.7,189.5 L442.6,188.6 L443.5,189.3 L444.4,191.6 L445.3,190.7 L446.2,188.9 L447.1,187.3 L448.0,190.3 L448.9,188.1 L449.8,190.1 L450.7,188.6 L451.6,190.1 L452.5,190.4 L453.4,189.4 L454.3,189.8 L455.2,189.9 L456.1,187.4 L457.0,189.6 L457.4,189.0 L457.4,132.8 L457.8,134.3 L458.7,134.1 L459.6,132.5 L460.5,134.4 L461.4,131.4 L462.3,132.2 L463.2,132.1 L464.1,134.0 L465.0,133.6 L465.9,134.5 L466.8,132.1 L467.7,131.3 L468.6,133.3 L469.5,128.6 L470.4,133.0 L471.3,132.1 L472.2,134.3 L473.1,131.9 L474.0,131.9 L474.9,131.5 L475.8,132.6 L476.7,131.5 L477.6,131.4 L478.5,132.2 L479.4,133.8 L480.3,132.7 L481.2,133.8 L482.1,132.5 L483.0,131.9 L483.9,132.9 L484.8,132.3 L485.7,131.4 L486.6,132.3 L487.5,132.7 L488.4,131.7 L489.3,132.2 L490.2,135.0 L491.1,130.3 L492.0,131.7 L492.9,133.0 L493.8,131.8 L494.7,132.0 L495.6,133.9 L496.5,133.6 L497.4,133.4 L498.3,131.1 L499.2,131.9 L500.1,134.0 L501.0,132.5 L501.9,134.6 L502.8,136.8 L503.7,131.9 L504.6,131.3 L505.5,132.3 L506.4,132.0 L507.3,131.7 L508.2,134.6 L509.1,133.5 L510.0,136.5 L510.9,131.1 L511.8,132.2 L512.7,132.6 L513.6,131.8 L513.8,132.8 L513.8,189.5 L514.2,190.0 L515.1,189.5 L516.0,190.9 L516.9,188.3 L517.8,189.6 L518.7,189.7 L519.6,191.0 L520.5,187.8 L521.4,187.7 L522.3,188.1 L523.2,190.6 L524.1,188.7 L525.0,190.2 L525.9,190.2 L526.8,189.2 L527.7,190.1 L528.6,188.1 L529.5,189.1 L530.4,189.1 L531.3,189.7 L532.2,189.0 L533.1,191.1 L534.0,191.1 L534.9,189.6 L535.8,189.8 L536.7,192.1 L537.6,188.8 L538.5,189.6 L539.4,190.3 L540.3,190.6 L541.2,188.8 L542.1,190.5 L543.0,189.0 L543.9,188.2 L544.8,189.4 L545.7,188.9 L546.6,189.6 L547.5,191.0 L548.4,190.2 L549.3,190.9 L550.2,189.7 L551.1,188.6 L552.0,190.6 L552.9,187.9 L553.8,194.2 L554.7,189.6 L555.6,189.7 L556.5,193.7 L557.4,188.0 L558.3,190.2 L559.2,190.7 L560.1,186.5 L561.0,188.5 L561.9,188.2 L562.8,190.5 L563.7,189.6 L564.6,190.4 L565.5,189.4 L566.4,191.3 L567.3,190.2 L568.2,190.4 L569.1,190.6 L570.0,190.9 L570.9,189.3 L571.8,190.7 L572.7,195.0 L573.6,190.3 L574.0,189.5" stroke="#0000ff" stroke-width="1.2" fill="none"/><path d="M48.1,131.7V134.5M50.1,130.6V134.4M51.1,132.0V133.5M52.1,130.0V134.5M53.1,132.1V134.9M55.1,129.7V134.6M56.1,129.9V136.2M60.1,132.0V134.0M61.1,131.5V135.0M64.1,131.8V133.4M65.1,132.1V134.2M66.1,131.1V134.3M67.1,130.1V135.6M70.1,131.5V133.9M71.1,131.5V134.4M72.1,130.8V134.8M75.1,131.9V133.8M78.1,132.2V134.0M79.1,131.2V133.6M81.1,130.7V133.9M82.1,131.9V134.9M83.1,128.7V134.0M84.1,131.0V135.0M86.1,131.6V135.0M87.1,130.7V133.8M88.1,130.7V133.8M89.1,129.9V135.2M93.1,130.9V133.4M94.1,130.7V133.8M95.1,131.3V133.8M97.1,130.6V136.1M98.1,131.1V134.0M99.1,132.1V135.0M101.1,130.9V135.0M103.1,131.8V134.2M106.1,128.7V134.8M107.1,128.7V134.3M109.1,131.3V134.3M110.1,130.7V134.1M111.1,131.5V134.3M112.1,132.2V133.5M114.1,131.8V134.7M117.1,132.2V134.6M118.1,129.9V133.8M119.1,131.8V134.3M121.1,132.1V134.5M122.1,131.8V134.1M124.1,131.7V134.2M125.1,131.6V134.5M126.1,130.9V133.7M127.1,131.2V134.1M129.1,131.0V134.5M130.1,132.0V134.4M132.1,131.4V134.5M133.1,129.7V134.3M134.1,131.3V134.8M136.1,130.0V134.4M137.1,129.0V134.4M140.1,130.7V134.1M141.1,128.6V134.3M142.1,130.6V133.5M143.1,131.4V134.6M144.1,128.5V135.5M145.1,132.1V133.5M146.1,132.2V134.2M147.1,130.3V135.9M148.1,130.7V134.0M149.1,129.4V134.5M151.1,131.8V133.9M153.1,132.1V133.9M154.1,128.8V134.1M156.1,131.4V134.1M157.1,130.6V134.9M161.1,132.1V134.7M163.1,130.0V134.5M165.1,132.2V133.9M166.1,132.1V135.0M169.1,131.5V133.6M174.1,132.2V133.5M177.1,131.8V134.8M178.1,131.7V133.4M180.1,131.0V134.7M181.1,128.3V135.7M184.1,131.0V133.8M185.1,131.7V135.0M186.1,131.5V133.6M188.1,131.1V134.2M190.1,131.5V134.6M193.1,130.8V134.6M194.1,129.8V135.2M195.1,132.0V133.9M196.1,132.1V134.5M198.1,130.3V135.6M200.1,130.2V135.2M201.1,131.8V133.6M203.1,128.5V134.2M204.1,131.4V133.5M205.1,131.3V134.2M207.1,129.2V135.3M209.1,132.2V135.0M211.1,132.0V133.8M212.1,130.5V133.8M213.1,132.2V133.8M214.1,131.9V133.4M215.1,131.8V133.9M216.1,131.6V133.9M217.1,130.9V134.6M218.1,132.2V133.8M220.1,131.9V134.7M222.1,131.4V134.3M223.1,131.7V134.4M225.1,129.2V134.7M226.1,132.2V134.7M229.1,131.0V133.7M230.1,131.9V134.8M233.1,130.7V133.8M234.1,129.1V134.4M235.1,132.0V134.7M236.1,132.0V133.8M237.1,129.2V135.1M240.1,131.3V133.7M241.1,132.0V133.5M242.1,130.8V134.4M243.1,131.8V134.3M244.1,132.2V133.6M245.1,129.3V134.0M247.1,131.3V134.2M248.1,130.7V134.0M249.1,131.3V134.7M252.1,131.1V134.4M256.1,131.3V134.1M257.1,130.9V133.8M259.1,131.5V134.5M264.1,131.1V134.2M266.1,131.6V133.4M267.1,131.3V133.9M268.1,131.4V133.5M269.1,131.5V134.0M270.1,131.4V134.0M271.1,132.2V134.3M273.1,131.6V133.9M275.1,130.9V133.4M276.1,131.9V134.0M277.1,131.6V134.9M278.1,131.3V134.9M279.1,129.3V135.9M280.1,132.1V134.9M281.1,131.3V133.5M283.1,131.2V133.9M285.1,131.8V134.8M286.1,131.8V134.2M288.1,131.9V134.7M289.1,131.5V134.7M292.1,130.8V134.0M294.1,130.8V134.2M295.1,132.0V134.2M296.1,131.9V134.8M297.1,128.6V134.2M298.1,131.5V133.6M299.1,130.7V134.6M300.1,131.2V134.8M302.1,130.7V136.0M303.1,131.8V133.6M304.1,131.3V134.1M305.1,132.0V134.5M306.1,131.7V134.7M310.1,131.6V134.1M311.1,131.0V134.8M312.1,131.4V134.9M314.1,132.0V134.1M315.1,130.9V133.7M316.1,130.6V133.4M317.1,130.6V135.7M318.1,130.7V133.8M320.1,132.1V133.5M321.1,131.6V135.0M322.1,131.1V133.5M323.1,131.3V133.6M324.1,129.7V134.6M327.1,132.0V133.5M328.1,131.2V134.9M331.1,130.9V134.6M332.1,130.6V134.4M333.1,131.9V133.6M334.1,129.2V135.9M335.1,132.2V135.0M336.1,131.8V134.8M337.1,130.9V134.8M338.1,129.3V133.8M339.1,129.3V135.7M340.1,132.0V133.8M341.1,130.6V134.1M342.1,130.9V134.3M343.1,130.7V134.3M344.1,131.3V134.8M345.1,131.5V134.3M347.1,130.3V135.3M348.1,131.4V134.5M349.1,131.4V133.9M350.1,128.7V135.0M351.1,130.1V134.4M352.1,131.3V133.8M354.1,131.6V133.8M358.1,132.1V134.4M359.1,130.8V134.5M360.1,131.5V134.5M361.1,131.6V134.7M363.1,130.5V134.3M364.1,132.1V134.4M365.1,128.5V135.2M367.1,131.4V133.9M368.1,130.7V134.2M369.1,131.6V133.7M370.1,129.5V135.0M373.1,132.2V134.5M374.1,129.2V135.1M375.1,131.5V134.7M376.1,130.7V134.1M378.1,131.9V134.5M381.1,128.8V134.0M382.1,130.9V133.9M383.1,130.8V134.5M384.1,132.1V134.3M386.1,128.6V134.1M387.1,130.3V134.6M388.1,131.5V133.5M389.1,129.2V136.1M391.1,130.8V134.3M393.1,132.1V134.5M394.1,130.6V134.3M396.1,131.7V134.5M398.1,131.8V134.1M400.1,131.9V134.2M401.1,130.6V134.5M403.2,187.2V190.1M404.2,187.6V191.0M406.2,187.3V190.6M407.2,187.3V190.4M408.2,187.3V189.8M409.2,187.0V190.5M410.2,187.3V190.4M411.2,187.5V189.6M412.2,188.3V191.2M414.2,186.6V192.1M415.2,187.1V190.6M416.2,185.1V190.7M418.2,187.2V190.9M419.2,187.7V190.2M420.2,187.0V190.7M421.2,187.5V191.0M422.2,187.8V190.7M423.2,187.6V190.0M424.2,187.3V190.1M428.2,187.6V189.8M429.2,188.3V190.4M432.2,188.0V191.1M433.2,187.0V191.0M434.2,186.9V190.6M435.2,187.7V190.6M436.2,187.0V191.0M437.2,188.4V190.8M438.2,185.4V190.2M439.2,187.0V190.2M440.2,186.8V189.9M441.2,186.8V191.4M443.2,187.2V191.1M448.2,187.1V190.9M449.2,185.3V190.4M450.2,187.9V191.0M452.2,186.8V189.7M453.2,187.9V189.7M455.2,187.8V191.0M456.2,187.4V190.3M457.9,130.7V133.8M458.9,131.4V133.6M459.9,131.4V134.7M460.9,132.1V134.9M461.9,130.8V133.5M462.9,130.4V134.5M463.9,131.0V134.1M464.9,131.6V134.2M465.9,130.7V133.7M466.9,131.3V134.0M468.9,131.1V134.0M470.9,131.5V133.9M471.9,131.8V134.5M472.9,131.1V133.9M473.9,131.3V134.5M474.9,129.7V134.0M475.9,132.0V133.7M476.9,131.1V133.9M478.9,131.8V133.7M479.9,131.1V134.3M480.9,130.9V134.5M481.9,131.2V134.5M482.9,132.1V134.0M484.9,131.2V133.5M487.9,131.6V134.2M488.9,131.9V133.6M490.9,130.7V134.9M494.9,132.0V135.0M496.9,129.3V134.9M497.9,132.0V134.3M498.9,132.0V134.8M499.9,128.6V134.5M500.9,130.1V135.9M501.9,131.2V134.3M502.9,132.1V134.2M503.9,130.9V133.7M504.9,131.7V134.7M505.9,131.2V133.5M506.9,131.1V134.2M507.9,131.4V134.9M508.9,131.3V134.1M509.9,132.1V134.8M510.9,129.9V134.5M511.9,130.7V134.7M512.9,131.2V134.3M514.3,188.8V191.3M515.3,188.0V190.1M516.3,188.6V191.1M517.3,185.0V192.2M518.3,188.9V191.6M519.3,187.5V190.2M521.3,188.6V190.7M522.3,188.0V190.5M524.3,187.8V191.1M527.3,187.8V190.7M531.3,186.8V192.8M534.3,187.6V191.2M537.3,188.3V191.4M538.3,186.2V192.7M539.3,188.9V190.8M540.3,187.6V190.2M542.3,188.7V191.3M544.3,187.9V191.0M546.3,188.0V190.8M547.3,187.8V190.3M551.3,188.3V190.3M552.3,188.0V191.5M554.3,187.7V191.4M555.3,187.5V190.4M556.3,188.1V191.3M557.3,188.4V191.5M558.3,188.2V190.5M559.3,187.8V190.7M560.3,186.3V190.5M562.3,188.0V191.6M563.3,188.8V190.4M564.3,187.5V190.9M565.3,188.5V190.9M566.3,188.4V191.5M567.3,188.5V191.1M568.3,188.1V191.1M569.3,188.0V190.6M571.3,185.2V192.0M572.3,188.6V191.2" stroke="#0000ff" stroke-width="1.0" fill="none"/><path d="M46.6,188.6 L47.5,189.5 L48.4,191.7 L49.3,191.2 L50.2,189.5 L51.1,189.8 L52.0,190.4 L52.9,189.0 L53.8,189.0 L54.7,191.6 L55.6,189.8 L56.5,188.5 L57.4,191.7 L58.3,189.0 L59.2,187.1 L60.1,188.7 L61.0,189.7 L61.9,190.3 L62.8,191.6 L63.7,191.9 L64.6,190.5 L65.5,189.0 L66.4,189.2 L67.3,190.7 L68.2,191.3 L69.1,194.8 L70.0,190.3 L70.9,189.3 L71.8,189.9 L72.7,188.7 L73.6,192.5 L74.5,190.5 L75.4,189.7 L76.3,190.2 L77.2,188.7 L78.1,189.4 L79.0,189.4 L79.9,189.3 L80.8,189.8 L81.7,191.2 L82.6,194.6 L83.5,191.0 L84.4,190.3 L85.3,189.5 L86.2,193.8 L87.1,191.8 L88.0,191.1 L88.9,195.0 L89.8,189.3 L90.7,191.0 L91.6,191.8 L92.5,192.2 L93.4,190.6 L94.3,190.9 L95.2,190.3 L96.1,189.2 L97.0,191.6 L97.5,190.3M97.5,135.5 L98.4,134.7 L99.3,134.8 L100.2,136.6 L101.1,132.1 L102.0,139.0 L102.9,135.9 L103.8,133.7 L104.7,134.2 L105.6,136.5 L106.5,130.5 L107.4,137.0 L108.3,133.7 L109.2,135.4 L110.1,135.5 L111.0,138.1 L111.9,135.8 L112.8,135.5 L113.7,133.2 L114.6,135.7 L115.5,133.2 L116.4,130.0 L117.3,138.4 L118.2,133.2 L119.1,135.9 L120.0,134.9 L120.9,135.2 L121.8,136.6 L122.7,136.5 L123.6,134.4 L124.5,135.3 L125.4,135.5 L125.5,134.7M125.5,192.2 L126.4,190.3 L127.3,188.8 L128.2,191.4 L129.1,190.8 L130.0,189.4 L130.9,189.9 L131.8,190.4 L132.7,191.8 L133.6,189.4 L134.5,188.8 L135.4,190.6 L136.3,191.8 L137.2,192.1 L138.1,187.2 L139.0,188.0 L139.9,190.2 L140.8,187.4 L141.7,185.0 L142.6,191.4 L143.5,188.6 L144.4,191.6 L145.3,189.5 L146.2,193.0 L147.1,189.2 L148.0,187.4 L148.9,192.4 L149.8,191.0 L150.7,190.2 L151.6,191.7 L152.5,191.0 L153.4,188.6 L153.5,190.3M153.5,135.8 L154.4,135.1 L155.3,135.7 L156.2,133.8 L157.1,133.8 L158.0,136.2 L158.9,133.5 L159.8,135.0 L160.7,134.5 L161.6,135.5 L162.5,134.8 L163.4,133.0 L164.3,134.0 L165.2,134.7 L166.1,136.7 L167.0,134.2 L167.9,136.4 L168.8,135.2 L169.7,134.2 L170.6,135.9 L171.5,133.3 L172.4,134.4 L173.3,134.6 L174.2,136.3 L175.1,135.8 L176.0,131.2 L176.9,134.1 L177.8,136.1 L178.7,134.3 L179.6,135.4 L180.5,134.7M180.5,188.5 L181.4,191.3 L182.3,189.5 L183.2,195.5 L184.1,190.9 L185.0,188.6 L185.9,190.0 L186.8,189.0 L187.7,188.7 L188.6,191.2 L189.5,191.2 L190.4,189.8 L191.3,188.7 L192.2,189.1 L193.1,191.4 L194.0,192.1 L194.9,188.9 L195.8,194.2 L196.7,190.5 L197.6,185.9 L198.5,191.1 L199.4,191.3 L200.3,189.5 L201.2,191.6 L202.1,189.0 L203.0,188.5 L203.9,189.4 L204.8,191.1 L205.7,190.5 L206.6,194.3 L207.5,191.8 L208.4,190.4 L208.5,190.3M208.5,136.4 L209.4,134.8 L210.3,135.1 L211.2,134.4 L212.1,134.3 L213.0,133.9 L213.9,136.2 L214.8,136.2 L215.7,135.7 L216.6,134.2 L217.5,136.5 L218.4,135.3 L219.3,133.2 L220.2,134.3 L221.1,135.4 L222.0,135.0 L222.9,133.2 L223.8,135.0 L224.7,135.5 L225.6,135.6 L226.5,133.7 L227.4,135.8 L228.3,139.1 L229.2,132.8 L230.1,134.0 L231.0,135.4 L231.9,133.0 L232.8,139.8 L233.7,136.5 L234.6,130.7 L235.5,134.4 L236.4,136.4 L236.5,134.7M236.5,192.0 L237.4,190.1 L238.3,191.4 L239.2,188.8 L240.1,190.4 L241.0,190.2 L241.9,189.7 L242.8,189.8 L243.7,188.6 L244.6,188.7 L245.5,192.1 L246.4,188.8 L247.3,189.8 L248.2,191.1 L249.1,189.4 L250.0,190.4 L250.9,189.8 L251.8,192.2 L252.7,190.3 L253.6,191.5 L254.5,189.8 L255.4,189.2 L256.3,188.5 L257.2,189.1 L258.1,194.8 L259.0,188.7 L259.9,192.0 L260.8,191.6 L261.7,190.1 L262.6,188.5 L263.5,190.9 L263.5,190.3M263.5,133.5 L264.4,135.1 L265.3,133.4 L266.2,136.6 L267.1,136.0 L268.0,135.4 L268.9,134.4 L269.8,131.0 L270.7,133.4 L271.6,134.1 L272.5,135.0 L273.4,136.3 L274.3,134.5 L275.2,135.0 L276.1,137.4 L277.0,134.1 L277.9,134.9 L278.8,136.7 L279.7,136.5 L280.6,134.8 L281.5,133.5 L282.4,134.6 L283.3,136.4 L284.2,135.5 L285.1,133.2 L286.0,132.9 L286.9,136.6 L287.8,133.2 L288.7,132.9 L289.6,133.6 L290.5,135.2 L291.4,132.8 L291.5,134.7M291.5,190.6 L292.4,188.6 L293.3,190.4 L294.2,192.2 L295.1,191.6 L296.0,191.4 L296.9,190.3 L297.8,188.8 L298.7,188.4 L299.6,190.1 L300.5,191.9 L301.4,192.7 L302.3,190.4 L303.2,188.8 L304.1,190.2 L305.0,188.9 L305.9,191.4 L306.8,189.4 L307.7,189.6 L308.6,188.8 L309.5,191.8 L310.4,191.3 L311.3,186.8 L312.2,191.2 L313.1,188.9 L314.0,188.7 L314.9,191.3 L315.8,192.1 L316.7,189.2 L317.6,189.1 L318.5,190.7 L319.4,191.3 L319.5,190.3M319.5,134.0 L320.4,136.4 L321.3,133.3 L322.2,134.4 L323.1,135.4 L324.0,135.0 L324.9,136.6 L325.8,138.3 L326.7,133.0 L327.6,136.4 L328.5,136.5 L329.4,135.7 L330.3,136.0 L331.2,135.1 L332.1,133.8 L333.0,136.2 L333.9,135.7 L334.8,134.4 L335.7,134.4 L336.6,135.8 L337.5,133.9 L338.4,135.4 L339.3,135.8 L340.2,136.7 L341.1,134.0 L342.0,140.2 L342.9,134.4 L343.8,134.2 L344.7,134.8 L345.6,132.9 L346.5,135.6 L346.5,134.7M346.5,189.9 L347.4,183.9 L348.3,190.5 L349.2,189.3 L350.1,192.8 L351.0,193.2 L351.9,190.3 L352.8,191.6 L353.7,192.0 L354.6,194.9 L355.5,189.6 L356.4,191.4 L357.3,191.3 L358.2,190.4 L359.1,188.6 L360.0,190.6 L360.9,189.7 L361.8,191.2 L362.7,191.0 L363.6,189.8 L364.5,190.2 L365.4,189.4 L366.3,189.9 L367.2,189.0 L368.1,190.3 L369.0,188.9 L369.9,195.1 L370.8,190.6 L371.7,188.5 L372.6,189.7 L373.5,189.1 L374.4,189.4 L374.5,190.3M374.5,135.5 L375.4,135.7 L376.3,133.0 L377.2,134.6 L378.1,136.4 L379.0,136.1 L379.9,138.5 L380.8,134.5 L381.7,134.7 L382.6,133.6 L383.5,132.9 L384.4,136.4 L385.3,133.9 L386.2,134.2 L387.1,133.9 L388.0,133.4 L388.9,133.8 L389.8,131.5 L390.7,133.1 L391.6,133.2 L392.5,134.2 L393.4,136.6 L394.3,134.4 L395.2,133.2 L396.1,136.2 L397.0,133.3 L397.9,136.3 L398.8,136.9 L399.7,132.8 L400.6,135.9 L401.5,132.7 L401.5,134.7M401.5,192.2 L402.4,189.8 L403.3,191.5 L404.2,189.8 L405.1,192.2 L406.0,190.1 L406.9,191.2 L407.8,190.2 L408.7,189.9 L409.6,191.4 L410.5,191.3 L411.4,191.5 L412.3,192.0 L413.2,190.1 L414.1,194.4 L415.0,189.6 L415.9,188.5 L416.8,191.4 L417.7,191.0 L418.6,188.7 L419.5,191.3 L420.4,190.5 L421.3,190.3 L422.2,190.2 L423.1,191.2 L424.0,191.4 L424.9,191.0 L425.8,191.8 L426.7,191.4 L427.6,189.7 L428.5,191.1 L429.4,195.6 L430.3,190.6 L430.5,190.3M430.5,135.6 L431.4,135.7 L432.3,133.2 L433.2,136.2 L434.1,133.6 L435.0,134.8 L435.9,134.7 L436.8,136.6 L437.7,136.6 L438.6,133.4 L439.5,134.2 L440.4,135.0 L441.3,133.9 L442.2,134.2 L443.1,134.7 L444.0,136.7 L444.9,132.7 L445.8,134.8 L446.7,136.0 L447.6,134.2 L448.5,134.3 L449.4,136.0 L450.3,134.4 L451.2,134.1 L452.1,141.0 L453.0,135.9 L453.9,135.3 L454.8,135.8 L455.7,134.2 L456.6,133.6 L457.5,136.1 L457.5,134.7M457.5,190.1 L458.4,187.7 L459.3,190.6 L460.2,190.5 L461.1,189.4 L462.0,189.8 L462.9,191.2 L463.8,188.5 L464.7,190.5 L465.6,191.0 L466.5,196.3 L467.4,190.7 L468.3,191.8 L469.2,191.8 L470.1,190.0 L471.0,194.8 L471.9,189.6 L472.8,186.3 L473.7,190.4 L474.6,189.1 L475.5,189.8 L476.4,189.7 L477.3,189.7 L478.2,186.9 L479.1,195.0 L480.0,191.0 L480.9,186.0 L481.8,189.7 L482.7,191.9 L483.6,190.8 L484.5,190.3 L485.4,190.3 L485.5,190.3" stroke="#ff0000" stroke-width="1.2" fill="none" stroke-dasharray="3.2 0.8 1.6 0.6"/><path d="M97.5,191.0V133.5M125.5,133.5V191.0M153.5,191.0V133.5M180.5,133.5V191.0M208.5,191.0V133.5M236.5,133.5V191.0M263.5,191.0V133.5M291.5,133.5V191.0M319.5,191.0V133.5M346.5,133.5V191.0M374.5,191.0V133.5M401.5,133.5V191.0M430.5,191.0V133.5M457.5,133.5V191.0" stroke="#ff0000" stroke-width="1.0" fill="none"/><path d="M485.5,190.5V134.0M485.5,136.0 L486.4,134.3 L487.3,136.6 L488.2,134.4 L489.1,133.5 L490.0,135.9 L490.9,134.6 L491.8,135.0 L492.7,133.2 L493.6,133.5 L494.5,135.4 L495.4,133.6 L496.3,134.0 L497.2,136.2 L498.1,134.3 L499.0,133.5 L499.9,135.4 L500.8,133.5 L501.7,133.9 L502.6,132.9 L503.5,134.8 L504.4,135.6 L505.3,133.8 L506.2,139.5 L507.1,135.6 L508.0,134.7 L508.9,131.8 L509.8,135.4 L510.7,135.9 L511.6,136.6 L512.5,134.0 L513.4,135.0 L513.5,134.7" stroke="#b00000" stroke-width="1.0" fill="none"/><path d="M523.9,189.6v2.8M524.8,190.5v1.2M529.3,189.5v2.8M537.4,191.7v1.7M540.1,190.0v1.9M541.0,192.1v1.9M541.9,190.4v2.5M544.6,192.1v2.3M556.3,190.3v2.0M559.0,190.9v1.2M563.5,191.0v1.2M568.0,190.6v1.6M574.0,190.6v1.3" stroke="#ff0000" stroke-width="1" fill="none"/><path d="M401.5,133V189.5M457.5,133V189.5M512.9,133V189.5" stroke="#0000ff" stroke-width="1.0" fill="none"/><rect x="513.5" y="131" width="1.2" height="62" fill="#ffff00"/><path d="M132.4,212.0 L141.5,206.0 L517.6,206.0 L525.8,212.0 L517.6,218.0 L141.5,218.0Z" fill="#c4c400"/></svg>
<svg class="abs" style="left:579px;top:104.3px" width="14.8" height="14.4" viewBox="0 0 14.8 14.4"><defs><linearGradient id="g104" x1="0" y1="0" x2="1" y2="1"><stop offset="0" stop-color="#c6d6f8"/><stop offset="1" stop-color="#9cb4ea"/></linearGradient></defs><rect x="0" y="0" width="14.8" height="14.4" fill="#dbe5fb"/><rect x="0.7" y="0.7" width="13.4" height="13.0" fill="url(#g104)"/><rect x="0.8" y="0.8" width="13.2" height="12.8" fill="#3f7fe0"/><path d="M1.6,3.6 L4.4,3.6 L5.4,2.2 L9.6,2.2 L10.6,3.6 L13.2,3.6 L13.2,12.6 L1.6,12.6Z" fill="#d8dbe2"/><rect x="1.6" y="3.6" width="2.6" height="9" fill="#5e636e"/><rect x="11" y="3.6" width="2.2" height="9" fill="#8a8f9a"/><rect x="6" y="0.9" width="3.2" height="1.5" fill="#f0b820"/><circle cx="8.3" cy="9.6" r="3.1" fill="#9aa0ae"/><circle cx="8.3" cy="10" r="2.4" fill="#1c4fd0"/><circle cx="8.1" cy="9.2" r="1" fill="#8fb8ff"/></svg>
<svg class="abs" style="left:579px;top:121px" width="14.8" height="14.4" viewBox="0 0 14.8 14.4"><defs><linearGradient id="g121" x1="0" y1="0" x2="1" y2="1"><stop offset="0" stop-color="#c6d6f8"/><stop offset="1" stop-color="#9cb4ea"/></linearGradient></defs><rect x="0" y="0" width="14.8" height="14.4" fill="#dbe5fb"/><rect x="0.7" y="0.7" width="13.4" height="13.0" fill="url(#g121)"/><rect x="5.2" y="3.4" width="7.2" height="6" fill="#f2f6ff" stroke="#8fa3d8" stroke-width="0.6"/><rect x="8.4" y="6.2" width="3" height="2.4" fill="#d6e6c0"/><circle cx="5.4" cy="6.8" r="2.3" fill="#e4f2ff" stroke="#6f8fc8" stroke-width="0.9"/><path d="M6.6,8.8 L8,10.4" stroke="#d89a20" stroke-width="1.7"/></svg>
<svg class="abs" style="left:579px;top:137.3px" width="14.8" height="14.4" viewBox="0 0 14.8 14.4"><defs><linearGradient id="g137" x1="0" y1="0" x2="1" y2="1"><stop offset="0" stop-color="#c6d6f8"/><stop offset="1" stop-color="#9cb4ea"/></linearGradient></defs><rect x="0" y="0" width="14.8" height="14.4" fill="#dbe5fb"/><rect x="0.7" y="0.7" width="13.4" height="13.0" fill="url(#g137)"/><path d="M4.6,5.6 C8.2,3.6 10.8,6 9.4,8.6 C8.8,9.8 7.6,10.6 6.4,10.7" stroke="#3f6fe8" stroke-width="1.5" fill="none"/><path d="M2.9,6.5 L6.6,3.6 L6.6,7.4Z" fill="#3f6fe8"/></svg>
<svg class="abs" style="left:579px;top:153.2px" width="14.8" height="14.8" viewBox="0 0 14.8 14.8"><defs><linearGradient id="g153" x1="0" y1="0" x2="1" y2="1"><stop offset="0" stop-color="#c6d6f8"/><stop offset="1" stop-color="#9cb4ea"/></linearGradient></defs><rect x="0" y="0" width="14.8" height="14.8" fill="#dbe5fb"/><rect x="0.7" y="0.7" width="13.4" height="13.4" fill="url(#g153)"/><path d="M7.4,2.2V12.6M1.8,7.4H13" stroke="#10182a" stroke-width="0.9"/><path d="M7.4,1.4l-1.8,2.2h3.6zM7.4,13.4l-1.8,-2.2h3.6zM1,7.4l2.2,-1.8v3.6zM13.8,7.4l-2.2,-1.8v3.6z" fill="#10182a"/><rect x="4.6" y="5" width="5.6" height="4.8" fill="#e8eeff" stroke="#4a6ad8" stroke-width="0.6" stroke-dasharray="1 0.6"/></svg>
<svg class="abs" style="left:579px;top:169.8px" width="14.8" height="14.2" viewBox="0 0 14.8 14.2"><defs><linearGradient id="g169" x1="0" y1="0" x2="1" y2="1"><stop offset="0" stop-color="#a9b9e8"/><stop offset="1" stop-color="#a0b0e2"/></linearGradient></defs><rect x="0" y="0" width="14.8" height="14.2" fill="#dbe5fb"/><rect x="0.7" y="0.7" width="13.4" height="12.799999999999999" fill="url(#g169)"/><path d="M4.4,11.6H9.4V13H4.4Z" fill="#111"/><path d="M3.6,8 L2.2,6.2 L3.2,5.5 L4.8,7 L4.6,3.6 L5.8,3.3 L6.3,6 L6.7,2.8 L7.9,2.8 L8.1,6 L8.9,3.3 L10,3.6 L9.8,6.6 L11,5 L11.8,5.5 L10.6,9 C10.4,11 9.4,12.2 7.2,12.2 C5.2,12.2 4.2,10.4 3.6,8Z" fill="#f6f6f6" stroke="#777" stroke-width="0.5"/></svg>
<svg class="abs" style="left:579px;top:186px" width="14.8" height="14.7" viewBox="0 0 14.8 14.7"><defs><linearGradient id="g186" x1="0" y1="0" x2="1" y2="1"><stop offset="0" stop-color="#c8daf9"/><stop offset="1" stop-color="#a4bcee"/></linearGradient></defs><rect x="0" y="0" width="14.8" height="14.7" fill="#dbe5fb"/><rect x="0.7" y="0.7" width="13.4" height="13.299999999999999" fill="url(#g186)"/><path d="M4.2,2.2L4,12M7.6,1.8L7.4,11.2" stroke="#e8505c" stroke-width="1.1"/></svg>
<svg class="abs" style="left:579px;top:202.3px" width="14.8" height="14" viewBox="0 0 14.8 14"><defs><linearGradient id="g202" x1="0" y1="0" x2="1" y2="1"><stop offset="0" stop-color="#c8daf9"/><stop offset="1" stop-color="#a4bcee"/></linearGradient></defs><rect x="0" y="0" width="14.8" height="14" fill="#dbe5fb"/><rect x="0.7" y="0.7" width="13.4" height="12.6" fill="url(#g202)"/><path d="M2.4,5.4H12.2M2.4,9H12.2" stroke="#e8505c" stroke-width="1.1"/></svg>
<svg class="abs" style="left:577.5px;top:218.5px" width="16" height="15" viewBox="0 0 16 15"><path d="M1,5.5 L5.5,0.8 L10,5.2 L5.2,10Z" fill="#e4e6ec" stroke="#8a8f9c" stroke-width="0.5"/><rect x="7.2" y="5.2" width="3.6" height="3.2" fill="#e02020"/><rect x="11" y="5.2" width="3.6" height="3.2" fill="#18a038"/><rect x="7.2" y="8.6" width="3.6" height="3.1" fill="#f0e020"/><rect x="11" y="8.6" width="3.6" height="3.1" fill="#2090e0"/><rect x="7.2" y="11.9" width="3.6" height="2.8" fill="#202080"/><rect x="11" y="11.9" width="3.6" height="2.8" fill="#f08020"/></svg>
<div class="abs" style="left:8.2px;top:241px;width:56.4px;height:30.5px;border:1px solid #b0b9e0;box-sizing:border-box"></div>
<div class="abs" style="left:12px;top:244.2px;width:49px;height:9.2px;background:#b0c4de"></div>
<div class="abs" style="left:12px;top:256px;width:49px;height:12.2px;background:#e1e1e1;border:1px solid #adadad;box-sizing:border-box"></div>
<svg class="abs" style="left:53px;top:260px" width="6" height="4" viewBox="0 0 6 4"><path d="M0.6,0.6 L3,3 L5.4,0.6" stroke="#444" stroke-width="0.8" fill="none"/></svg>
<div class="abs" style="left:71px;top:241px;width:163.3px;height:30.5px;border:1px solid #b0b9e0;box-sizing:border-box"></div>
<div class="abs" style="left:74.2px;top:244.4px;width:157px;height:9.2px;background:#b0c4de"></div>
<div class="abs" style="left:74.4px;top:258.9px;width:24.69999999999999px;height:7.9px;background:#ff0000"></div>
<svg class="abs" style="left:99.7px;top:259.4px" width="7.6" height="7.4" viewBox="0 0 7.6 7.4"><rect x="0.3" y="0.3" width="7" height="6.6" fill="#fff" stroke="#3c3c3c" stroke-width="0.6"/><path d="M1.5,3.6 L2.9,5.1 L6.1,1.9" stroke="#444" stroke-width="0.75" fill="none"/></svg>
<div class="abs" style="left:124.3px;top:258.9px;width:12.500000000000014px;height:7.9px;background:#ffff00"></div>
<svg class="abs" style="left:137.6px;top:259.4px" width="7.6" height="7.4" viewBox="0 0 7.6 7.4"><rect x="0.3" y="0.3" width="7" height="6.6" fill="#fff" stroke="#3c3c3c" stroke-width="0.6"/><path d="M1.5,3.6 L2.9,5.1 L6.1,1.9" stroke="#444" stroke-width="0.75" fill="none"/></svg>
<div class="abs" style="left:159px;top:258.9px;width:19.599999999999994px;height:7.9px;background:#32cd32"></div>
<svg class="abs" style="left:179px;top:259.4px" width="7.6" height="7.4" viewBox="0 0 7.6 7.4"><rect x="0.3" y="0.3" width="7" height="6.6" fill="#fff" stroke="#3c3c3c" stroke-width="0.6"/><path d="M1.5,3.6 L2.9,5.1 L6.1,1.9" stroke="#444" stroke-width="0.75" fill="none"/></svg>
<div class="abs" style="left:201.7px;top:258.9px;width:19.600000000000023px;height:7.9px;background:#87ceeb"></div>
<svg class="abs" style="left:221.7px;top:259.4px" width="7.6" height="7.4" viewBox="0 0 7.6 7.4"><rect x="0.3" y="0.3" width="7" height="6.6" fill="#fff" stroke="#3c3c3c" stroke-width="0.6"/><path d="M1.5,3.6 L2.9,5.1 L6.1,1.9" stroke="#444" stroke-width="0.75" fill="none"/></svg>
<div class="abs" style="left:240px;top:240.7px;width:159.8px;height:30.7px;background:#e6e6fa;border-left:0.7px solid #7d8198;border-top:0.7px solid #7d8198;box-sizing:border-box"></div>
<div class="abs" style="left:389.1px;top:241.4px;width:10.5px;height:29.8px;background:#f0f0f0"></div>
<svg class="abs" style="left:391.6px;top:245.6px" width="5" height="3.4" viewBox="0 0 5 3.4"><path d="M0.5,2.9 L2.5,0.7 L4.5,2.9" stroke="#a0a0a0" stroke-width="0.9" fill="none"/></svg>
<svg class="abs" style="left:391.6px;top:264.6px" width="5" height="3.4" viewBox="0 0 5 3.4"><path d="M0.5,0.5 L2.5,2.7 L4.5,0.5" stroke="#a0a0a0" stroke-width="0.9" fill="none"/></svg>
<div class="abs" style="left:405.1px;top:240.3px;width:190.7px;height:20.1px;border:1px solid #b0b9e0;box-sizing:border-box"></div>
<div class="abs" style="left:408.3px;top:242.5px;width:184.7px;height:8.9px;background:#b0c4de"></div>
<div class="abs" style="left:474px;top:264.6px;width:123px;height:11.6px;background:#e1e1e1;border:1px solid #adadad;box-sizing:border-box"></div>
<svg class="abs" style="left:588.5px;top:268.6px" width="6" height="4" viewBox="0 0 6 4"><path d="M0.6,0.6 L3,3 L5.4,0.6" stroke="#444" stroke-width="0.8" fill="none"/></svg>
<div class="abs" style="left:0;top:278.4px;width:600px;height:164.6px;background:#fff"></div>
<div class="abs" style="left:1.1px;top:310px;width:588.3px;height:13.45999999999998px;background:#0078d7"></div>
<div class="abs" style="left:1.1px;top:323.46px;width:588.3px;height:12.939999999999998px;background:#dcdcdc"></div>
<div class="abs" style="left:1.1px;top:336.4px;width:588.3px;height:12.939999999999998px;background:#e6e6fa"></div>
<div class="abs" style="left:1.1px;top:349.34px;width:588.3px;height:12.939999999999998px;background:#dcdcdc"></div>
<div class="abs" style="left:1.1px;top:362.28px;width:588.3px;height:12.940000000000055px;background:#e6e6fa"></div>
<div class="abs" style="left:1.1px;top:375.22px;width:588.3px;height:12.939999999999998px;background:#dcdcdc"></div>
<div class="abs" style="left:1.1px;top:388.16px;width:588.3px;height:12.939999999999998px;background:#e6e6fa"></div>
<div class="abs" style="left:1.1px;top:401.1px;width:588.3px;height:12.939999999999998px;background:#dcdcdc"></div>
<div class="abs" style="left:1.1px;top:414.04px;width:588.3px;height:12.939999999999998px;background:#e6e6fa"></div>
<div class="abs" style="left:1.1px;top:426.98px;width:588.3px;height:5.6200000000000045px;background:#dcdcdc"></div>
<div class="abs" style="left:1.1px;top:322.46px;width:588.3px;height:1px;background:#93a7ec"></div>
<div class="abs" style="left:1.1px;top:322.06px;width:588.3px;height:1.8px;background:#93a7ec;opacity:0.25"></div>
<div class="abs" style="left:1.1px;top:335.4px;width:588.3px;height:1px;background:#93a7ec"></div>
<div class="abs" style="left:1.1px;top:335.0px;width:588.3px;height:1.8px;background:#93a7ec;opacity:0.25"></div>
<div class="abs" style="left:1.1px;top:348.34px;width:588.3px;height:1px;background:#93a7ec"></div>
<div class="abs" style="left:1.1px;top:347.94px;width:588.3px;height:1.8px;background:#93a7ec;opacity:0.25"></div>
<div class="abs" style="left:1.1px;top:361.28px;width:588.3px;height:1px;background:#93a7ec"></div>
<div class="abs" style="left:1.1px;top:360.88px;width:588.3px;height:1.8px;background:#93a7ec;opacity:0.25"></div>
<div class="abs" style="left:1.1px;top:374.22px;width:588.3px;height:1px;background:#93a7ec"></div>
<div class="abs" style="left:1.1px;top:373.82000000000005px;width:588.3px;height:1.8px;background:#93a7ec;opacity:0.25"></div>
<div class="abs" style="left:1.1px;top:387.16px;width:588.3px;height:1px;background:#93a7ec"></div>
<div class="abs" style="left:1.1px;top:386.76000000000005px;width:588.3px;height:1.8px;background:#93a7ec;opacity:0.25"></div>
<div class="abs" style="left:1.1px;top:400.1px;width:588.3px;height:1px;background:#93a7ec"></div>
<div class="abs" style="left:1.1px;top:399.70000000000005px;width:588.3px;height:1.8px;background:#93a7ec;opacity:0.25"></div>
<div class="abs" style="left:1.1px;top:413.04px;width:588.3px;height:1px;background:#93a7ec"></div>
<div class="abs" style="left:1.1px;top:412.64000000000004px;width:588.3px;height:1.8px;background:#93a7ec;opacity:0.25"></div>
<div class="abs" style="left:1.1px;top:425.98px;width:588.3px;height:1px;background:#93a7ec"></div>
<div class="abs" style="left:1.1px;top:425.58000000000004px;width:588.3px;height:1.8px;background:#93a7ec;opacity:0.25"></div>
<div class="abs" style="left:60.3px;top:279px;width:1px;height:31px;background:#ebebeb"></div>
<div class="abs" style="left:60.25px;top:310px;width:1.3px;height:122.60000000000002px;background:#93a7ec;opacity:0.8"></div>
<div class="abs" style="left:113.7px;top:279px;width:1px;height:31px;background:#ebebeb"></div>
<div class="abs" style="left:113.64999999999999px;top:310px;width:1.3px;height:122.60000000000002px;background:#93a7ec;opacity:0.8"></div>
<div class="abs" style="left:166.5px;top:279px;width:1px;height:31px;background:#ebebeb"></div>
<div class="abs" style="left:166.45px;top:310px;width:1.3px;height:122.60000000000002px;background:#93a7ec;opacity:0.8"></div>
<div class="abs" style="left:227.0px;top:279px;width:1px;height:31px;background:#ebebeb"></div>
<div class="abs" style="left:226.95px;top:310px;width:1.3px;height:122.60000000000002px;background:#93a7ec;opacity:0.8"></div>
<div class="abs" style="left:317.0px;top:279px;width:1px;height:31px;background:#ebebeb"></div>
<div class="abs" style="left:316.95000000000005px;top:310px;width:1.3px;height:122.60000000000002px;background:#93a7ec;opacity:0.8"></div>
<div class="abs" style="left:400.7px;top:279px;width:1px;height:31px;background:#ebebeb"></div>
<div class="abs" style="left:400.65000000000003px;top:310px;width:1.3px;height:122.60000000000002px;background:#93a7ec;opacity:0.8"></div>
<div class="abs" style="left:487.0px;top:279px;width:1px;height:31px;background:#ebebeb"></div>
<div class="abs" style="left:486.95000000000005px;top:310px;width:1.3px;height:122.60000000000002px;background:#93a7ec;opacity:0.8"></div>
<div class="abs" style="left:584.4px;top:279px;width:1px;height:31px;background:#ebebeb"></div>
<div class="abs" style="left:584.35px;top:310px;width:1.3px;height:122.60000000000002px;background:#93a7ec;opacity:0.8"></div>
<svg class="abs" style="left:394px;top:293.5px" width="5" height="3" viewBox="0 0 5 3"><path d="M0,3 L2.5,0.3 L5,3Z" fill="#a8a8a8"/></svg>
<div class="abs" style="left:589.9px;top:279px;width:8.8px;height:153.3px;background:#f0f0f0"></div>
<div class="abs" style="left:589.9px;top:289.1px;width:8.8px;height:18px;background:#cdcdcd"></div>
<svg class="abs" style="left:591.6px;top:282px" width="5.6" height="4" viewBox="0 0 5.6 4"><path d="M0.5,3.3 L2.8,0.8 L5.1,3.3" stroke="#404040" stroke-width="1.25" fill="none"/></svg>
<svg class="abs" style="left:591.6px;top:425.2px" width="5.6" height="4" viewBox="0 0 5.6 4"><path d="M0.5,0.7 L2.8,3.2 L5.1,0.7" stroke="#404040" stroke-width="1.25" fill="none"/></svg>
<div class="abs" style="left:1.5px;top:432.6px;width:597px;height:9.4px;background:#f0f0f0"></div>
<div class="abs" style="left:10.5px;top:432.6px;width:91.3px;height:9.4px;background:#cdcdcd"></div>
<svg class="abs" style="left:3.6px;top:434.2px" width="4" height="5.6" viewBox="0 0 4 5.6"><path d="M3.3,0.5 L0.8,2.8 L3.3,5.1" stroke="#404040" stroke-width="1.25" fill="none"/></svg>
<svg class="abs" style="left:583px;top:434.4px" width="4" height="5.6" viewBox="0 0 4 5.6"><path d="M0.7,0.5 L3.2,2.8 L0.7,5.1" stroke="#404040" stroke-width="1.25" fill="none"/></svg>
<div class="abs" style="left:0;top:278.2px;width:1px;height:32px;background:#3a3a3a"></div>
<div class="abs" style="left:0;top:310px;width:1.1px;height:122.3px;background:#0c1c62"></div>
<div class="abs" style="left:0;top:432.6px;width:1.2px;height:11px;background:#707070"></div>
<div class="abs" style="left:0;top:441.7px;width:600px;height:1.5px;background:#5a5a5a"></div>
<div class="abs" style="left:598.6px;top:278.4px;width:1.4px;height:165px;background:#8a8a8a"></div>
<div class="abs" style="left:0;top:278.1px;width:600px;height:0.8px;background:#33364a"></div>
<span class="t" style="left:1.90px;top:2.92px;font-family:'Liberation Sans', sans-serif;font-size:7.8px;line-height:9.36px;font-weight:normal;color:#000;transform:scaleX(0.8730);">SPI Decode and Measurement Detail View</span>
<span class="t" style="left:591.86px;top:2.64px;font-family:'Liberation Sans', sans-serif;font-size:6.6px;line-height:7.92px;font-weight:bold;color:#fff;">x</span>
<span class="t" style="left:285.90px;top:19.44px;font-family:'Liberation Sans', sans-serif;font-size:7.6px;line-height:9.12px;font-weight:bold;color:#fff;transform:scaleX(0.9368);">Waveform View</span>
<span class="t" style="left:292.45px;top:104.14px;font-family:'Liberation Sans', sans-serif;font-size:7.6px;line-height:9.12px;font-weight:bold;color:#fff;transform:scaleX(0.9249);">Message View</span>
<span class="t" style="left:22.90px;top:37.80px;font-family:'Liberation Sans', sans-serif;font-size:8.0px;line-height:9.6px;font-weight:normal;color:#fff;transform:scaleX(0.8027);">6.2 V</span>
<span class="t" style="left:22.90px;top:68.50px;font-family:'Liberation Sans', sans-serif;font-size:8.0px;line-height:9.6px;font-weight:normal;color:#fff;transform:scaleX(0.7543);">-1.4 V</span>
<span class="t" style="left:24.20px;top:118.00px;font-family:'Liberation Sans', sans-serif;font-size:8.0px;line-height:9.6px;font-weight:normal;color:#fff;transform:scaleX(0.8134);">6.2 V</span>
<span class="t" style="left:23.30px;top:195.70px;font-family:'Liberation Sans', sans-serif;font-size:8.0px;line-height:9.6px;font-weight:normal;color:#fff;transform:scaleX(0.7543);">-1.4 V</span>
<span class="t" style="left:46.50px;top:87.90px;font-family:'Liberation Sans', sans-serif;font-size:8.0px;line-height:9.6px;font-weight:normal;color:#fff;transform:scaleX(0.7849);">0.0000S</span>
<span class="t" style="left:135.70px;top:87.90px;font-family:'Liberation Sans', sans-serif;font-size:8.0px;line-height:9.6px;font-weight:normal;color:#fff;transform:scaleX(0.7700);">20.001 mS</span>
<span class="t" style="left:238.80px;top:87.90px;font-family:'Liberation Sans', sans-serif;font-size:8.0px;line-height:9.6px;font-weight:normal;color:#fff;transform:scaleX(0.7751);">40.002 mS</span>
<span class="t" style="left:349.50px;top:87.90px;font-family:'Liberation Sans', sans-serif;font-size:8.0px;line-height:9.6px;font-weight:normal;color:#fff;transform:scaleX(0.7674);">60.002 mS</span>
<span class="t" style="left:448.70px;top:87.90px;font-family:'Liberation Sans', sans-serif;font-size:8.0px;line-height:9.6px;font-weight:normal;color:#fff;transform:scaleX(0.7622);">80.003 mS</span>
<span class="t" style="left:547.50px;top:87.90px;font-family:'Liberation Sans', sans-serif;font-size:8.0px;line-height:9.6px;font-weight:normal;color:#fff;transform:scaleX(0.7622);">100.01 mS</span>
<span class="t" style="left:282.00px;top:87.74px;font-family:'Liberation Sans', sans-serif;font-size:7.6px;line-height:9.12px;font-weight:bold;color:#fff;transform:scaleX(0.9043);">Time(Seconds) --&gt;</span>
<span class="t" style="left:47.00px;top:222.90px;font-family:'Liberation Sans', sans-serif;font-size:8.0px;line-height:9.6px;font-weight:normal;color:#fff;transform:scaleX(0.7648);">84.384 mS</span>
<span class="t" style="left:135.70px;top:222.90px;font-family:'Liberation Sans', sans-serif;font-size:8.0px;line-height:9.6px;font-weight:normal;color:#fff;transform:scaleX(0.7622);">84.422 mS</span>
<span class="t" style="left:239.30px;top:222.90px;font-family:'Liberation Sans', sans-serif;font-size:8.0px;line-height:9.6px;font-weight:normal;color:#fff;transform:scaleX(0.7622);">84.460 mS</span>
<span class="t" style="left:349.20px;top:222.90px;font-family:'Liberation Sans', sans-serif;font-size:8.0px;line-height:9.6px;font-weight:normal;color:#fff;transform:scaleX(0.7751);">84.497 mS</span>
<span class="t" style="left:448.40px;top:222.90px;font-family:'Liberation Sans', sans-serif;font-size:8.0px;line-height:9.6px;font-weight:normal;color:#fff;transform:scaleX(0.7751);">84.535 mS</span>
<span class="t" style="left:544.20px;top:222.90px;font-family:'Liberation Sans', sans-serif;font-size:8.0px;line-height:9.6px;font-weight:normal;color:#fff;transform:scaleX(0.7751);">84.572 mS</span>
<span class="t" style="left:282.00px;top:222.74px;font-family:'Liberation Sans', sans-serif;font-size:7.6px;line-height:9.12px;font-weight:bold;color:#fff;transform:scaleX(0.9043);">Time(Seconds) --&gt;</span>
<span class="t" style="left:133.01px;top:142.14px;font-family:'Liberation Sans', sans-serif;font-size:8.6px;line-height:10.32px;font-weight:bold;color:#0a9a1e;">1</span>
<span class="t" style="left:133.01px;top:154.24px;font-family:'Liberation Sans', sans-serif;font-size:8.6px;line-height:10.32px;font-weight:bold;color:#0030f0;">1</span>
<span class="t" style="left:189.31px;top:142.14px;font-family:'Liberation Sans', sans-serif;font-size:8.6px;line-height:10.32px;font-weight:bold;color:#0a9a1e;">1</span>
<span class="t" style="left:189.31px;top:154.24px;font-family:'Liberation Sans', sans-serif;font-size:8.6px;line-height:10.32px;font-weight:bold;color:#0030f0;">1</span>
<span class="t" style="left:245.31px;top:142.14px;font-family:'Liberation Sans', sans-serif;font-size:8.6px;line-height:10.32px;font-weight:bold;color:#0a9a1e;">1</span>
<span class="t" style="left:245.31px;top:154.24px;font-family:'Liberation Sans', sans-serif;font-size:8.6px;line-height:10.32px;font-weight:bold;color:#0030f0;">1</span>
<span class="t" style="left:301.61px;top:142.14px;font-family:'Liberation Sans', sans-serif;font-size:8.6px;line-height:10.32px;font-weight:bold;color:#0a9a1e;">1</span>
<span class="t" style="left:301.61px;top:154.24px;font-family:'Liberation Sans', sans-serif;font-size:8.6px;line-height:10.32px;font-weight:bold;color:#0030f0;">1</span>
<span class="t" style="left:358.21px;top:142.14px;font-family:'Liberation Sans', sans-serif;font-size:8.6px;line-height:10.32px;font-weight:bold;color:#0a9a1e;">1</span>
<span class="t" style="left:358.21px;top:154.24px;font-family:'Liberation Sans', sans-serif;font-size:8.6px;line-height:10.32px;font-weight:bold;color:#0030f0;">1</span>
<span class="t" style="left:413.61px;top:142.14px;font-family:'Liberation Sans', sans-serif;font-size:8.6px;line-height:10.32px;font-weight:bold;color:#0a9a1e;">0</span>
<span class="t" style="left:413.61px;top:154.24px;font-family:'Liberation Sans', sans-serif;font-size:8.6px;line-height:10.32px;font-weight:bold;color:#0030f0;">0</span>
<span class="t" style="left:469.61px;top:142.14px;font-family:'Liberation Sans', sans-serif;font-size:8.6px;line-height:10.32px;font-weight:bold;color:#0a9a1e;">1</span>
<span class="t" style="left:469.61px;top:154.24px;font-family:'Liberation Sans', sans-serif;font-size:8.6px;line-height:10.32px;font-weight:bold;color:#0030f0;">1</span>
<span class="t" style="left:526.31px;top:142.14px;font-family:'Liberation Sans', sans-serif;font-size:8.6px;line-height:10.32px;font-weight:bold;color:#0a9a1e;">0</span>
<span class="t" style="left:526.31px;top:154.24px;font-family:'Liberation Sans', sans-serif;font-size:8.6px;line-height:10.32px;font-weight:bold;color:#0030f0;">0</span>
<span class="t" style="left:283.00px;top:207.20px;font-family:'Liberation Sans', sans-serif;font-size:8.0px;line-height:9.6px;font-weight:bold;color:#000;transform:scaleX(0.9761);">MOSI: 0xFA / MISO: 0xFA</span>
<span class="t" style="left:15.00px;top:243.80px;font-family:'Liberation Sans', sans-serif;font-size:8.0px;line-height:9.6px;font-weight:normal;color:#111;transform:scaleX(0.7426);">Number Format</span>
<span class="t" style="left:14.60px;top:257.50px;font-family:'Liberation Sans', sans-serif;font-size:8.0px;line-height:9.6px;font-weight:normal;color:#000;transform:scaleX(0.7306);">Hex</span>
<span class="t" style="left:140.05px;top:244.10px;font-family:'Liberation Sans', sans-serif;font-size:8.0px;line-height:9.6px;font-weight:normal;color:#111;transform:scaleX(0.7589);">Legends</span>
<span class="t" style="left:75.70px;top:258.10px;font-family:'Liberation Sans', sans-serif;font-size:8.0px;line-height:9.6px;font-weight:normal;color:#fff;transform:scaleX(0.7873);">CLOCK</span>
<span class="t" style="left:126.00px;top:258.10px;font-family:'Liberation Sans', sans-serif;font-size:8.0px;line-height:9.6px;font-weight:normal;color:#4a4a00;transform:scaleX(0.7820);">CS</span>
<span class="t" style="left:160.75px;top:258.10px;font-family:'Liberation Sans', sans-serif;font-size:8.0px;line-height:9.6px;font-weight:normal;color:#d4f7d4;transform:scaleX(0.7676);">MOSI</span>
<span class="t" style="left:203.30px;top:258.10px;font-family:'Liberation Sans', sans-serif;font-size:8.0px;line-height:9.6px;font-weight:normal;color:#e6f6ff;transform:scaleX(0.7823);">MISO</span>
<span class="t" style="left:242.00px;top:241.32px;font-family:'Liberation Sans', sans-serif;font-size:7.8px;line-height:9.36px;font-weight:normal;color:#000;transform:scaleX(0.7877);">MOSI = 0xFA</span>
<span class="t" style="left:242.00px;top:249.02px;font-family:'Liberation Sans', sans-serif;font-size:7.8px;line-height:9.36px;font-weight:normal;color:#000;transform:scaleX(0.7877);">MISO = 0xFA</span>
<span class="t" style="left:485.20px;top:242.92px;font-family:'Liberation Sans', sans-serif;font-size:7.8px;line-height:9.36px;font-weight:normal;color:#111;transform:scaleX(0.7936);">Annotation</span>
<span class="t" style="left:475.95px;top:251.14px;font-family:'Liberation Sans', sans-serif;font-size:7.6px;line-height:9.12px;font-weight:normal;color:#c8c83a;transform:scaleX(0.7933);">MOSI/ MISO Word</span>
<span class="t" style="left:477.00px;top:265.32px;font-family:'Liberation Sans', sans-serif;font-size:7.8px;line-height:9.36px;font-weight:normal;color:#000;transform:scaleX(0.7913);">Show All Messages</span>
<span class="t" style="left:6.00px;top:290.65px;font-family:'Liberation Mono', monospace;font-size:7.75px;line-height:9.3px;font-weight:normal;color:#000;text-shadow:0 0 0.3px #000;">Start</span>
<span class="t" style="left:65.30px;top:290.65px;font-family:'Liberation Mono', monospace;font-size:7.75px;line-height:9.3px;font-weight:normal;color:#000;text-shadow:0 0 0.3px #000;">MOSI</span>
<span class="t" style="left:118.20px;top:290.65px;font-family:'Liberation Mono', monospace;font-size:7.75px;line-height:9.3px;font-weight:normal;color:#000;text-shadow:0 0 0.3px #000;">MISO</span>
<span class="t" style="left:171.80px;top:290.65px;font-family:'Liberation Mono', monospace;font-size:7.75px;line-height:9.3px;font-weight:normal;color:#000;text-shadow:0 0 0.3px #000;">Stop</span>
<span class="t" style="left:232.00px;top:290.65px;font-family:'Liberation Mono', monospace;font-size:7.75px;line-height:9.3px;font-weight:normal;color:#000;text-shadow:0 0 0.3px #000;">Time</span>
<span class="t" style="left:321.80px;top:286.05px;font-family:'Liberation Mono', monospace;font-size:7.75px;line-height:9.3px;font-weight:normal;color:#000;text-shadow:0 0 0.3px #000;">Minimum Clock</span>
<span class="t" style="left:321.80px;top:295.85px;font-family:'Liberation Mono', monospace;font-size:7.75px;line-height:9.3px;font-weight:normal;color:#000;text-shadow:0 0 0.3px #000;">High Time</span>
<span class="t" style="left:405.40px;top:286.05px;font-family:'Liberation Mono', monospace;font-size:7.75px;line-height:9.3px;font-weight:normal;color:#000;text-shadow:0 0 0.3px #000;">Mean Clock</span>
<span class="t" style="left:405.40px;top:295.85px;font-family:'Liberation Mono', monospace;font-size:7.75px;line-height:9.3px;font-weight:normal;color:#000;text-shadow:0 0 0.3px #000;">High Time</span>
<span class="t" style="left:492.00px;top:286.05px;font-family:'Liberation Mono', monospace;font-size:7.75px;line-height:9.3px;font-weight:normal;color:#000;text-shadow:0 0 0.3px #000;">Maximum Clock</span>
<span class="t" style="left:492.00px;top:295.85px;font-family:'Liberation Mono', monospace;font-size:7.75px;line-height:9.3px;font-weight:normal;color:#000;text-shadow:0 0 0.3px #000;">High Time</span>
<span class="t" style="left:28.55px;top:313.73px;font-family:'Liberation Mono', monospace;font-size:6.8px;line-height:8.16px;font-weight:bold;color:#fff;">1</span>
<span class="t" style="left:79.44px;top:313.73px;font-family:'Liberation Mono', monospace;font-size:6.8px;line-height:8.16px;font-weight:bold;color:#fff;">0xFA</span>
<span class="t" style="left:132.54px;top:313.73px;font-family:'Liberation Mono', monospace;font-size:6.8px;line-height:8.16px;font-weight:bold;color:#fff;">0xFA</span>
<span class="t" style="left:193.26px;top:313.73px;font-family:'Liberation Mono', monospace;font-size:6.8px;line-height:8.16px;font-weight:bold;color:#fff;">NP</span>
<span class="t" style="left:254.24px;top:313.73px;font-family:'Liberation Mono', monospace;font-size:6.8px;line-height:8.16px;font-weight:bold;color:#fff;">84.385 mS</span>
<span class="t" style="left:341.09px;top:313.73px;font-family:'Liberation Mono', monospace;font-size:6.8px;line-height:8.16px;font-weight:bold;color:#fff;">9.9328 µS</span>
<span class="t" style="left:426.09px;top:313.73px;font-family:'Liberation Mono', monospace;font-size:6.8px;line-height:8.16px;font-weight:bold;color:#fff;">9.9436 µS</span>
<span class="t" style="left:517.94px;top:313.73px;font-family:'Liberation Mono', monospace;font-size:6.8px;line-height:8.16px;font-weight:bold;color:#fff;">9.9548 µS</span>
<span class="t" style="left:26.51px;top:326.93px;font-family:'Liberation Mono', monospace;font-size:6.8px;line-height:8.16px;font-weight:bold;color:#111;">NP</span>
<span class="t" style="left:79.44px;top:326.93px;font-family:'Liberation Mono', monospace;font-size:6.8px;line-height:8.16px;font-weight:bold;color:#111;">0xFA</span>
<span class="t" style="left:132.54px;top:326.93px;font-family:'Liberation Mono', monospace;font-size:6.8px;line-height:8.16px;font-weight:bold;color:#111;">0xFA</span>
<span class="t" style="left:193.26px;top:326.93px;font-family:'Liberation Mono', monospace;font-size:6.8px;line-height:8.16px;font-weight:bold;color:#111;">NP</span>
<span class="t" style="left:254.24px;top:326.93px;font-family:'Liberation Mono', monospace;font-size:6.8px;line-height:8.16px;font-weight:bold;color:#111;">72.844 mS</span>
<span class="t" style="left:341.09px;top:326.93px;font-family:'Liberation Mono', monospace;font-size:6.8px;line-height:8.16px;font-weight:bold;color:#111;">9.9328 µS</span>
<span class="t" style="left:426.09px;top:326.93px;font-family:'Liberation Mono', monospace;font-size:6.8px;line-height:8.16px;font-weight:bold;color:#111;">9.9436 µS</span>
<span class="t" style="left:517.94px;top:326.93px;font-family:'Liberation Mono', monospace;font-size:6.8px;line-height:8.16px;font-weight:bold;color:#111;">9.9548 µS</span>
<span class="t" style="left:26.51px;top:339.87px;font-family:'Liberation Mono', monospace;font-size:6.8px;line-height:8.16px;font-weight:bold;color:#111;">NP</span>
<span class="t" style="left:79.44px;top:339.87px;font-family:'Liberation Mono', monospace;font-size:6.8px;line-height:8.16px;font-weight:bold;color:#111;">0xFA</span>
<span class="t" style="left:132.54px;top:339.87px;font-family:'Liberation Mono', monospace;font-size:6.8px;line-height:8.16px;font-weight:bold;color:#111;">0xFA</span>
<span class="t" style="left:193.26px;top:339.87px;font-family:'Liberation Mono', monospace;font-size:6.8px;line-height:8.16px;font-weight:bold;color:#111;">NP</span>
<span class="t" style="left:254.24px;top:339.87px;font-family:'Liberation Mono', monospace;font-size:6.8px;line-height:8.16px;font-weight:bold;color:#111;">72.844 mS</span>
<span class="t" style="left:341.09px;top:339.87px;font-family:'Liberation Mono', monospace;font-size:6.8px;line-height:8.16px;font-weight:bold;color:#111;">9.9328 µS</span>
<span class="t" style="left:426.09px;top:339.87px;font-family:'Liberation Mono', monospace;font-size:6.8px;line-height:8.16px;font-weight:bold;color:#111;">9.9436 µS</span>
<span class="t" style="left:517.94px;top:339.87px;font-family:'Liberation Mono', monospace;font-size:6.8px;line-height:8.16px;font-weight:bold;color:#111;">9.9548 µS</span>
<span class="t" style="left:26.51px;top:352.81px;font-family:'Liberation Mono', monospace;font-size:6.8px;line-height:8.16px;font-weight:bold;color:#111;">NP</span>
<span class="t" style="left:79.44px;top:352.81px;font-family:'Liberation Mono', monospace;font-size:6.8px;line-height:8.16px;font-weight:bold;color:#111;">0xFA</span>
<span class="t" style="left:132.54px;top:352.81px;font-family:'Liberation Mono', monospace;font-size:6.8px;line-height:8.16px;font-weight:bold;color:#111;">0xFA</span>
<span class="t" style="left:193.26px;top:352.81px;font-family:'Liberation Mono', monospace;font-size:6.8px;line-height:8.16px;font-weight:bold;color:#111;">NP</span>
<span class="t" style="left:254.24px;top:352.81px;font-family:'Liberation Mono', monospace;font-size:6.8px;line-height:8.16px;font-weight:bold;color:#111;">72.844 mS</span>
<span class="t" style="left:341.09px;top:352.81px;font-family:'Liberation Mono', monospace;font-size:6.8px;line-height:8.16px;font-weight:bold;color:#111;">9.9328 µS</span>
<span class="t" style="left:426.09px;top:352.81px;font-family:'Liberation Mono', monospace;font-size:6.8px;line-height:8.16px;font-weight:bold;color:#111;">9.9436 µS</span>
<span class="t" style="left:517.94px;top:352.81px;font-family:'Liberation Mono', monospace;font-size:6.8px;line-height:8.16px;font-weight:bold;color:#111;">9.9548 µS</span>
<span class="t" style="left:26.51px;top:365.75px;font-family:'Liberation Mono', monospace;font-size:6.8px;line-height:8.16px;font-weight:bold;color:#111;">NP</span>
<span class="t" style="left:79.44px;top:365.75px;font-family:'Liberation Mono', monospace;font-size:6.8px;line-height:8.16px;font-weight:bold;color:#111;">0xFA</span>
<span class="t" style="left:132.54px;top:365.75px;font-family:'Liberation Mono', monospace;font-size:6.8px;line-height:8.16px;font-weight:bold;color:#111;">0xFA</span>
<span class="t" style="left:193.26px;top:365.75px;font-family:'Liberation Mono', monospace;font-size:6.8px;line-height:8.16px;font-weight:bold;color:#111;">NP</span>
<span class="t" style="left:254.24px;top:365.75px;font-family:'Liberation Mono', monospace;font-size:6.8px;line-height:8.16px;font-weight:bold;color:#111;">72.844 mS</span>
<span class="t" style="left:341.09px;top:365.75px;font-family:'Liberation Mono', monospace;font-size:6.8px;line-height:8.16px;font-weight:bold;color:#111;">9.9328 µS</span>
<span class="t" style="left:426.09px;top:365.75px;font-family:'Liberation Mono', monospace;font-size:6.8px;line-height:8.16px;font-weight:bold;color:#111;">9.9436 µS</span>
<span class="t" style="left:517.94px;top:365.75px;font-family:'Liberation Mono', monospace;font-size:6.8px;line-height:8.16px;font-weight:bold;color:#111;">9.9548 µS</span>
<span class="t" style="left:26.51px;top:378.69px;font-family:'Liberation Mono', monospace;font-size:6.8px;line-height:8.16px;font-weight:bold;color:#111;">NP</span>
<span class="t" style="left:79.44px;top:378.69px;font-family:'Liberation Mono', monospace;font-size:6.8px;line-height:8.16px;font-weight:bold;color:#111;">0xFA</span>
<span class="t" style="left:132.54px;top:378.69px;font-family:'Liberation Mono', monospace;font-size:6.8px;line-height:8.16px;font-weight:bold;color:#111;">0xFA</span>
<span class="t" style="left:193.26px;top:378.69px;font-family:'Liberation Mono', monospace;font-size:6.8px;line-height:8.16px;font-weight:bold;color:#111;">NP</span>
<span class="t" style="left:254.24px;top:378.69px;font-family:'Liberation Mono', monospace;font-size:6.8px;line-height:8.16px;font-weight:bold;color:#111;">72.844 mS</span>
<span class="t" style="left:341.09px;top:378.69px;font-family:'Liberation Mono', monospace;font-size:6.8px;line-height:8.16px;font-weight:bold;color:#111;">9.9328 µS</span>
<span class="t" style="left:426.09px;top:378.69px;font-family:'Liberation Mono', monospace;font-size:6.8px;line-height:8.16px;font-weight:bold;color:#111;">9.9436 µS</span>
<span class="t" style="left:517.94px;top:378.69px;font-family:'Liberation Mono', monospace;font-size:6.8px;line-height:8.16px;font-weight:bold;color:#111;">9.9548 µS</span>
<span class="t" style="left:26.51px;top:391.63px;font-family:'Liberation Mono', monospace;font-size:6.8px;line-height:8.16px;font-weight:bold;color:#111;">NP</span>
<span class="t" style="left:79.44px;top:391.63px;font-family:'Liberation Mono', monospace;font-size:6.8px;line-height:8.16px;font-weight:bold;color:#111;">0xFA</span>
<span class="t" style="left:132.54px;top:391.63px;font-family:'Liberation Mono', monospace;font-size:6.8px;line-height:8.16px;font-weight:bold;color:#111;">0xFA</span>
<span class="t" style="left:193.26px;top:391.63px;font-family:'Liberation Mono', monospace;font-size:6.8px;line-height:8.16px;font-weight:bold;color:#111;">NP</span>
<span class="t" style="left:254.24px;top:391.63px;font-family:'Liberation Mono', monospace;font-size:6.8px;line-height:8.16px;font-weight:bold;color:#111;">72.844 mS</span>
<span class="t" style="left:341.09px;top:391.63px;font-family:'Liberation Mono', monospace;font-size:6.8px;line-height:8.16px;font-weight:bold;color:#111;">9.9328 µS</span>
<span class="t" style="left:426.09px;top:391.63px;font-family:'Liberation Mono', monospace;font-size:6.8px;line-height:8.16px;font-weight:bold;color:#111;">9.9436 µS</span>
<span class="t" style="left:517.94px;top:391.63px;font-family:'Liberation Mono', monospace;font-size:6.8px;line-height:8.16px;font-weight:bold;color:#111;">9.9548 µS</span>
<span class="t" style="left:26.51px;top:404.57px;font-family:'Liberation Mono', monospace;font-size:6.8px;line-height:8.16px;font-weight:bold;color:#111;">NP</span>
<span class="t" style="left:79.44px;top:404.57px;font-family:'Liberation Mono', monospace;font-size:6.8px;line-height:8.16px;font-weight:bold;color:#111;">0xFA</span>
<span class="t" style="left:132.54px;top:404.57px;font-family:'Liberation Mono', monospace;font-size:6.8px;line-height:8.16px;font-weight:bold;color:#111;">0xFA</span>
<span class="t" style="left:193.26px;top:404.57px;font-family:'Liberation Mono', monospace;font-size:6.8px;line-height:8.16px;font-weight:bold;color:#111;">NP</span>
<span class="t" style="left:254.24px;top:404.57px;font-family:'Liberation Mono', monospace;font-size:6.8px;line-height:8.16px;font-weight:bold;color:#111;">72.844 mS</span>
<span class="t" style="left:341.09px;top:404.57px;font-family:'Liberation Mono', monospace;font-size:6.8px;line-height:8.16px;font-weight:bold;color:#111;">9.9328 µS</span>
<span class="t" style="left:426.09px;top:404.57px;font-family:'Liberation Mono', monospace;font-size:6.8px;line-height:8.16px;font-weight:bold;color:#111;">9.9436 µS</span>
<span class="t" style="left:517.94px;top:404.57px;font-family:'Liberation Mono', monospace;font-size:6.8px;line-height:8.16px;font-weight:bold;color:#111;">9.9548 µS</span>
<span class="t" style="left:26.51px;top:417.51px;font-family:'Liberation Mono', monospace;font-size:6.8px;line-height:8.16px;font-weight:bold;color:#111;">NP</span>
<span class="t" style="left:79.44px;top:417.51px;font-family:'Liberation Mono', monospace;font-size:6.8px;line-height:8.16px;font-weight:bold;color:#111;">0xFA</span>
<span class="t" style="left:132.54px;top:417.51px;font-family:'Liberation Mono', monospace;font-size:6.8px;line-height:8.16px;font-weight:bold;color:#111;">0xFA</span>
<span class="t" style="left:193.26px;top:417.51px;font-family:'Liberation Mono', monospace;font-size:6.8px;line-height:8.16px;font-weight:bold;color:#111;">NP</span>
<span class="t" style="left:254.24px;top:417.51px;font-family:'Liberation Mono', monospace;font-size:6.8px;line-height:8.16px;font-weight:bold;color:#111;">72.844 mS</span>
<span class="t" style="left:341.09px;top:417.51px;font-family:'Liberation Mono', monospace;font-size:6.8px;line-height:8.16px;font-weight:bold;color:#111;">9.9328 µS</span>
<span class="t" style="left:426.09px;top:417.51px;font-family:'Liberation Mono', monospace;font-size:6.8px;line-height:8.16px;font-weight:bold;color:#111;">9.9436 µS</span>
<span class="t" style="left:517.94px;top:417.51px;font-family:'Liberation Mono', monospace;font-size:6.8px;line-height:8.16px;font-weight:bold;color:#111;">9.9548 µS</span>
<span class="t" style="left:26.51px;top:430.45px;font-family:'Liberation Mono', monospace;font-size:6.8px;line-height:8.16px;font-weight:bold;color:#111;clip-path:inset(0 0 6.01px 0);">NP</span>
<span class="t" style="left:79.44px;top:430.45px;font-family:'Liberation Mono', monospace;font-size:6.8px;line-height:8.16px;font-weight:bold;color:#111;clip-path:inset(0 0 6.01px 0);">0xFA</span>
<span class="t" style="left:132.54px;top:430.45px;font-family:'Liberation Mono', monospace;font-size:6.8px;line-height:8.16px;font-weight:bold;color:#111;clip-path:inset(0 0 6.01px 0);">0xFA</span>
<span class="t" style="left:193.26px;top:430.45px;font-family:'Liberation Mono', monospace;font-size:6.8px;line-height:8.16px;font-weight:bold;color:#111;clip-path:inset(0 0 6.01px 0);">NP</span>
<span class="t" style="left:254.24px;top:430.45px;font-family:'Liberation Mono', monospace;font-size:6.8px;line-height:8.16px;font-weight:bold;color:#111;clip-path:inset(0 0 6.01px 0);">72.844 mS</span>
<span class="t" style="left:341.09px;top:430.45px;font-family:'Liberation Mono', monospace;font-size:6.8px;line-height:8.16px;font-weight:bold;color:#111;clip-path:inset(0 0 6.01px 0);">9.9328 µS</span>
<span class="t" style="left:426.09px;top:430.45px;font-family:'Liberation Mono', monospace;font-size:6.8px;line-height:8.16px;font-weight:bold;color:#111;clip-path:inset(0 0 6.01px 0);">9.9436 µS</span>
<span class="t" style="left:517.94px;top:430.45px;font-family:'Liberation Mono', monospace;font-size:6.8px;line-height:8.16px;font-weight:bold;color:#111;clip-path:inset(0 0 6.01px 0);">9.9548 µS</span>
<span class="t" style="left:15.3px;top:59.3px;font-size:9.2px;line-height:11px;color:#fff;transform:translate(-50%,-50%) rotate(-90deg) scaleX(0.865);transform-origin:center">Amplitube</span><span class="t" style="left:15.3px;top:161px;font-size:9.2px;line-height:11px;color:#fff;transform:translate(-50%,-50%) rotate(-90deg) scaleX(0.865);transform-origin:center">Amplitube</span>
</body></html>
